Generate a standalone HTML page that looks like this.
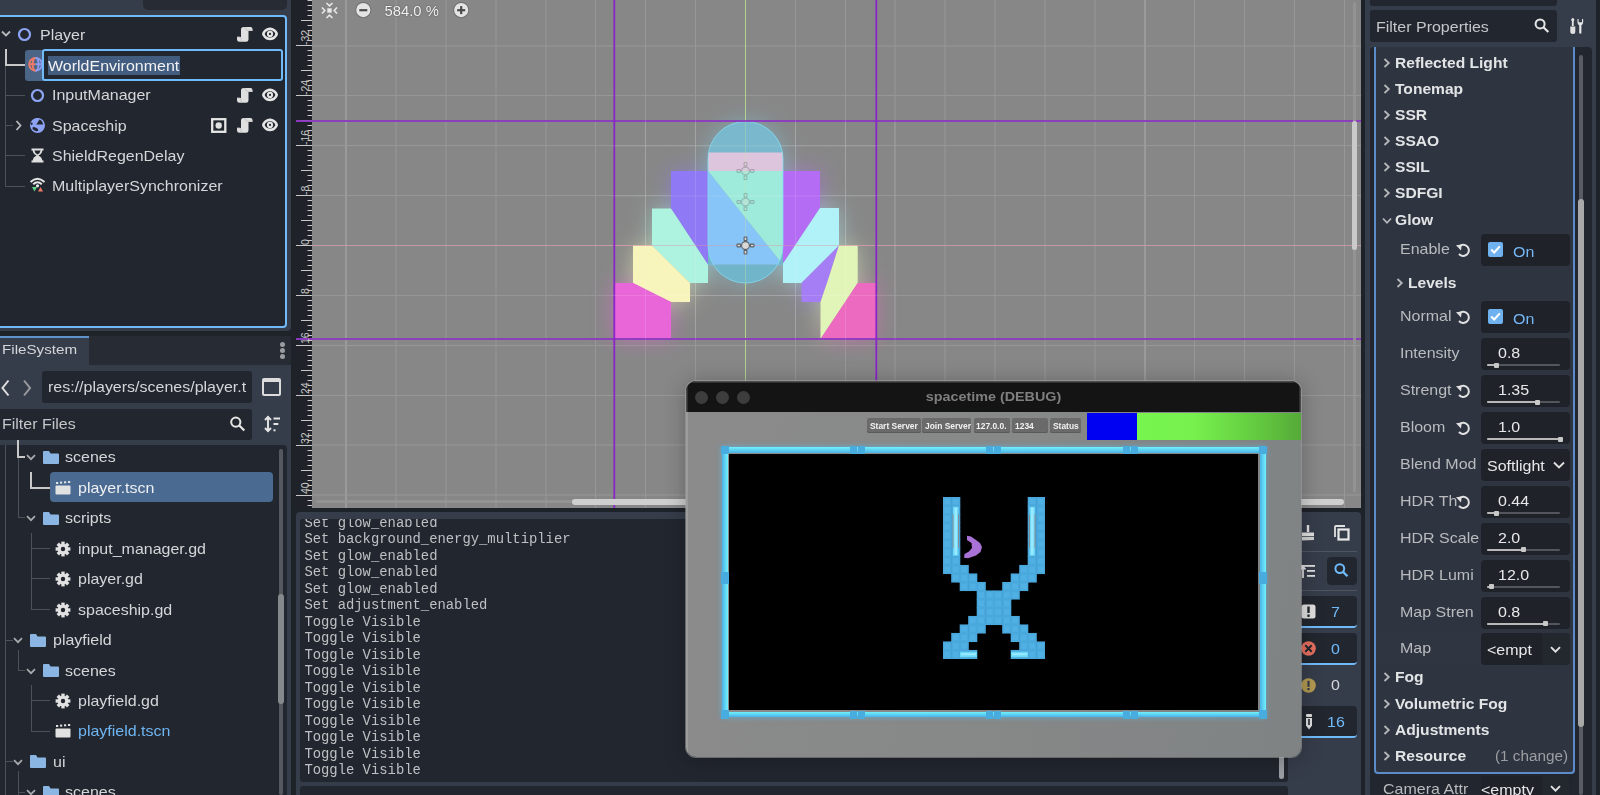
<!DOCTYPE html>
<html><head><meta charset="utf-8">
<style>
*{margin:0;padding:0;box-sizing:border-box}
html,body{width:1600px;height:795px;overflow:hidden;background:#1e2229;font-family:"Liberation Sans",sans-serif;color:#cdcfd2}
.a{position:absolute}
.t{position:absolute;white-space:nowrap;font-size:16px;line-height:20px;color:#d4d6d9}
.m{position:absolute;white-space:nowrap;font-family:"Liberation Mono",monospace;font-size:13.87px;line-height:16px;color:#bec0c3;transform:translateZ(0)}
.b{font-weight:bold}
</style></head><body>
<div id="root" class="a" style="left:0;top:0;width:1600px;height:795px;overflow:hidden">

<!-- ===== LEFT DOCK ===== -->
<div id="leftdock" class="a" style="left:0;top:0;width:291px;height:795px">
  <div class="a" style="left:0;top:0;width:291px;height:331px;background:#363d4a;border-radius:0 0 4px 0"></div>
  <div class="a" style="left:143px;top:0;width:144px;height:10px;background:#262b34;border-radius:0 0 5px 5px"></div>
  <div class="a" style="left:-4px;top:15px;width:291px;height:313px;background:#22262e;border:2px solid #70bafa;border-radius:4px"></div>
  <div class="a" style="left:4.5px;top:49px;width:2px;height:16px;background:#c8c8c8"></div>
<div class="a" style="left:5px;top:64px;width:20px;height:2px;background:#c8c8c8"></div>
<div class="a" style="left:5px;top:66px;width:1px;height:120px;background:#4b5059"></div>
<div class="a" style="left:5px;top:95px;width:20px;height:1px;background:#4b5059"></div>
<div class="a" style="left:5px;top:155px;width:20px;height:1px;background:#4b5059"></div>
<div class="a" style="left:5px;top:186px;width:20px;height:1px;background:#4b5059"></div>
<div class="a" style="left:5px;top:125px;width:8px;height:1px;background:#4b5059"></div>
<svg class="a" style="left:1px;top:30px" width="10" height="8" viewBox="0 0 10 8"><path d="M1 1.5 L5 5.5 L9 1.5" fill="none" stroke="#b8babd" stroke-width="1.8"/></svg>
<svg class="a" style="left:15px;top:120px" width="8" height="11" viewBox="0 0 8 11"><path d="M1.5 1 L5.5 5.5 L1.5 10" fill="none" stroke="#b8babd" stroke-width="1.8"/></svg>
<svg class="a" style="left:17px;top:27px" width="15" height="15" viewBox="0 0 15 15"><circle cx="7.5" cy="7.5" r="5.5" fill="none" stroke="#8da5f3" stroke-width="2.2"/></svg>
<svg class="a" style="left:30px;top:88px" width="15" height="15" viewBox="0 0 15 15"><circle cx="7.5" cy="7.5" r="5.5" fill="none" stroke="#8da5f3" stroke-width="2.2"/></svg>
<svg class="a" style="left:30px;top:118px" width="16" height="16" viewBox="0 0 16 16"><circle cx="7.5" cy="7.4" r="7.5" fill="#8da2f3"/><path d="M6.2 6.6 L9.6 1.6 Q12.4 2.6 13.1 6.6 Z" fill="#22262e"/><ellipse cx="5.3" cy="11.1" rx="3.1" ry="1.6" transform="rotate(25 5.3 11.1)" fill="#22262e"/><ellipse cx="1.7" cy="5.8" rx="0.9" ry="1.3" fill="#22262e"/></svg>
<svg class="a" style="left:30px;top:148px" width="15" height="15" viewBox="0 0 15 15"><path d="M1.5 0.5 H13.5 V2.5 H12.3 Q12 6 8.3 7.5 Q12 9 12.3 12.5 H13.5 V14.5 H1.5 V12.5 H2.7 Q3 9 6.7 7.5 Q3 6 2.7 2.5 H1.5 Z" fill="#e0e0e0"/><path d="M4.4 2.5 H10.6 Q10.3 5.2 7.5 6.4 Q4.7 5.2 4.4 2.5 Z" fill="#22262e"/></svg>
<svg class="a" style="left:29px;top:176px" width="17" height="16" viewBox="0 0 17 16"><path d="M1.5 6 Q8.5 -0.5 15.5 6" fill="none" stroke="#e6e6e6" stroke-width="2"/><path d="M4.2 8.3 Q8.5 4.3 12.8 8.3" fill="none" stroke="#e6e6e6" stroke-width="2"/><circle cx="8.5" cy="9.8" r="1.6" fill="#e6e6e6"/><path d="M3 11 H8 L5.5 15.5 Z" fill="#5fd48a"/><path d="M9 15.5 H14 L11.5 11 Z" fill="#f07a6a"/></svg>
<div class="a" style="left:25px;top:50px;width:20px;height:31px;background:#4a6585;border-radius:3px 0 0 3px"></div>
<svg class="a" style="left:27px;top:56px" width="16" height="17" viewBox="0 0 16 17"><defs><clipPath id="cl"><rect x="0" y="0" width="8.6" height="17"/></clipPath><clipPath id="cr"><rect x="8.6" y="0" width="8" height="17"/></clipPath></defs><g fill="none" stroke-width="1.9"><g clip-path="url(#cl)" stroke="#f07a6a"><circle cx="8.6" cy="8.3" r="6.4"/><ellipse cx="8.6" cy="8.3" rx="3" ry="6.4"/><path d="M2.2 8.3 H15"/></g><g clip-path="url(#cr)" stroke="#8d9cf0"><circle cx="8.6" cy="8.3" r="6.4"/><ellipse cx="8.6" cy="8.3" rx="3" ry="6.4"/><path d="M2.2 8.3 H15"/></g></g></svg>
<div class="a" style="left:42px;top:49px;width:241px;height:32px;background:#22262e;border:2px solid #70bafa;border-radius:3px"></div>
<div class="a" style="left:48px;top:56px;width:132px;height:19px;background:#425d80"></div>
<div class="t" style="left:48px;top:56px;color:#f2f2f2;font-size:14.40px;transform:scaleX(1.1111);transform-origin:0 50%">WorldEnvironment</div>
<div class="t" style="left:40px;top:24.5px;font-size:14.40px;transform:scaleX(1.1111);transform-origin:0 50%">Player</div>
<div class="t" style="left:52px;top:85.0px;font-size:14.40px;transform:scaleX(1.1111);transform-origin:0 50%">InputManager</div>
<div class="t" style="left:52px;top:115.5px;font-size:14.40px;transform:scaleX(1.1111);transform-origin:0 50%">Spaceship</div>
<div class="t" style="left:52px;top:145.5px;font-size:14.40px;transform:scaleX(1.1111);transform-origin:0 50%">ShieldRegenDelay</div>
<div class="t" style="left:52px;top:176.0px;font-size:14.40px;transform:scaleX(1.1111);transform-origin:0 50%">MultiplayerSynchronizer</div>
<svg class="a" style="left:237px;top:27px" width="16" height="15" viewBox="0 0 16 15"><path d="M4 2.5 Q4 0 6.5 0 H13.5 Q15.5 0 15.5 2 V4 H11.5 V12.5 Q11.5 14.8 9 14.8 H2.5 Q0 14.8 0 12.5 V10 H4 Z" fill="#dfdfdf"/><path d="M6.5 0.2 Q9.5 0.5 9.3 3.2 H15.5" fill="none" stroke="#bdbdbd" stroke-width="0.8"/><path d="M0 10 H3 Q4.2 10 4.2 12.5 V14.8" fill="none" stroke="#bdbdbd" stroke-width="0.8"/></svg>
<svg class="a" style="left:262px;top:27px" width="16" height="14" viewBox="0 0 16 14"><path d="M8 0.6 C12.6 0.6 15.5 4.6 16 6.9 C15.5 9.2 12.6 13.2 8 13.2 C3.4 13.2 0.5 9.2 0 6.9 C0.5 4.6 3.4 0.6 8 0.6 Z" fill="#e6e6e6"/><path d="M8 3.3 C10.9 3.3 12.8 5.3 13.3 6.9 C12.8 8.5 10.9 10.5 8 10.5 C5.1 10.5 3.2 8.5 2.7 6.9 C3.2 5.3 5.1 3.3 8 3.3 Z" fill="#22262e"/><circle cx="8" cy="6.9" r="3.1" fill="#e6e6e6"/><circle cx="8" cy="6.9" r="1.1" fill="#22262e"/></svg>
<svg class="a" style="left:237px;top:88px" width="16" height="15" viewBox="0 0 16 15"><path d="M4 2.5 Q4 0 6.5 0 H13.5 Q15.5 0 15.5 2 V4 H11.5 V12.5 Q11.5 14.8 9 14.8 H2.5 Q0 14.8 0 12.5 V10 H4 Z" fill="#dfdfdf"/><path d="M6.5 0.2 Q9.5 0.5 9.3 3.2 H15.5" fill="none" stroke="#bdbdbd" stroke-width="0.8"/><path d="M0 10 H3 Q4.2 10 4.2 12.5 V14.8" fill="none" stroke="#bdbdbd" stroke-width="0.8"/></svg>
<svg class="a" style="left:262px;top:88px" width="16" height="14" viewBox="0 0 16 14"><path d="M8 0.6 C12.6 0.6 15.5 4.6 16 6.9 C15.5 9.2 12.6 13.2 8 13.2 C3.4 13.2 0.5 9.2 0 6.9 C0.5 4.6 3.4 0.6 8 0.6 Z" fill="#e6e6e6"/><path d="M8 3.3 C10.9 3.3 12.8 5.3 13.3 6.9 C12.8 8.5 10.9 10.5 8 10.5 C5.1 10.5 3.2 8.5 2.7 6.9 C3.2 5.3 5.1 3.3 8 3.3 Z" fill="#22262e"/><circle cx="8" cy="6.9" r="3.1" fill="#e6e6e6"/><circle cx="8" cy="6.9" r="1.1" fill="#22262e"/></svg>
<svg class="a" style="left:237px;top:118px" width="16" height="15" viewBox="0 0 16 15"><path d="M4 2.5 Q4 0 6.5 0 H13.5 Q15.5 0 15.5 2 V4 H11.5 V12.5 Q11.5 14.8 9 14.8 H2.5 Q0 14.8 0 12.5 V10 H4 Z" fill="#dfdfdf"/><path d="M6.5 0.2 Q9.5 0.5 9.3 3.2 H15.5" fill="none" stroke="#bdbdbd" stroke-width="0.8"/><path d="M0 10 H3 Q4.2 10 4.2 12.5 V14.8" fill="none" stroke="#bdbdbd" stroke-width="0.8"/></svg>
<svg class="a" style="left:262px;top:118px" width="16" height="14" viewBox="0 0 16 14"><path d="M8 0.6 C12.6 0.6 15.5 4.6 16 6.9 C15.5 9.2 12.6 13.2 8 13.2 C3.4 13.2 0.5 9.2 0 6.9 C0.5 4.6 3.4 0.6 8 0.6 Z" fill="#e6e6e6"/><path d="M8 3.3 C10.9 3.3 12.8 5.3 13.3 6.9 C12.8 8.5 10.9 10.5 8 10.5 C5.1 10.5 3.2 8.5 2.7 6.9 C3.2 5.3 5.1 3.3 8 3.3 Z" fill="#22262e"/><circle cx="8" cy="6.9" r="3.1" fill="#e6e6e6"/><circle cx="8" cy="6.9" r="1.1" fill="#22262e"/></svg>
<svg class="a" style="left:211px;top:118px" width="16" height="15" viewBox="0 0 16 15"><rect x="1.2" y="1.2" width="13.1" height="12.6" fill="none" stroke="#e6e6e6" stroke-width="2.3"/><circle cx="7.7" cy="7.5" r="3.2" fill="#e0e0e0"/></svg>


  <div class="a" style="left:0;top:336px;width:291px;height:459px;background:#363d4a;border-radius:4px 4px 0 0"></div>
  <div class="a" style="left:89px;top:336px;width:202px;height:29px;background:#262b34;border-radius:0 4px 0 0"></div>
  <div class="a" style="left:0;top:336px;width:89px;height:2px;background:#5e93cc"></div>
  <div class="t" style="left:2px;top:340px;font-size:13.68px;transform:scaleX(1.1111);transform-origin:0 50%">FileSystem</div>
  <div class="a" style="left:280px;top:342px;width:5px;height:5px;border-radius:50%;background:#9a9ca0"></div>
  <div class="a" style="left:280px;top:348px;width:5px;height:5px;border-radius:50%;background:#9a9ca0"></div>
  <div class="a" style="left:280px;top:354px;width:5px;height:5px;border-radius:50%;background:#9a9ca0"></div>
  <!-- path row -->
  <div class="a" style="left:42px;top:371px;width:210px;height:32px;background:#22262e;border-radius:3px"></div>
  <div class="t" style="left:48px;top:377px;font-size:14.40px;transform:scaleX(1.1111);transform-origin:0 50%">res://players/scenes/player.t</div>
  <div class="a" style="left:262px;top:378px;width:19px;height:18px;border:2.5px solid #dcdcdc;border-top-width:4px;border-radius:2px;background:#363d4a"></div>
  <!-- filter row -->
  <div class="a" style="left:-4px;top:409px;width:256px;height:31px;background:#22262e;border-radius:3px"></div>
  <div class="t" style="left:2px;top:414px;color:#c4c6c9;font-size:14.40px;transform:scaleX(1.1111);transform-origin:0 50%">Filter Files</div>
  <svg class="a" style="left:0;top:378px" width="34" height="20" viewBox="0 0 34 20"><path d="M8.5 2.5 L2.5 10 L8.5 17.5" fill="none" stroke="#e0e0e0" stroke-width="2"/><path d="M24 2.5 L30 10 L24 17.5" fill="none" stroke="#9a9ca0" stroke-width="2"/></svg>
  <svg class="a" style="left:228px;top:415px" width="18" height="18" viewBox="0 0 18 18"><circle cx="7.8" cy="7.1" r="4.6" fill="none" stroke="#e6e6e6" stroke-width="2"/><path d="M11 10.3 L16.3 15.5" stroke="#e6e6e6" stroke-width="2.2"/></svg>
  <svg class="a" style="left:263px;top:415px" width="19" height="18" viewBox="0 0 19 18"><path d="M5 2 V16 M2 5 L5 1.8 L8 5 M2 13 L5 16.2 L8 13" fill="none" stroke="#e6e6e6" stroke-width="1.9"/><rect x="10.5" y="2.5" width="6.5" height="2" fill="#e6e6e6"/><rect x="10.5" y="8" width="4.8" height="2" fill="#e6e6e6"/><rect x="10.5" y="14.3" width="2" height="2" fill="#e6e6e6"/></svg>
  <div id="fstree" class="a" style="left:-4px;top:445px;width:291px;height:360px;background:#22262e;border-radius:4px"></div>
<div class="a" style="left:5px;top:445px;width:1px;height:350px;background:#4b5059"></div>
<div class="a" style="left:18px;top:445px;width:1px;height:73px;background:#4b5059"></div>
<div class="a" style="left:18px;top:517px;width:7px;height:1px;background:#4b5059"></div>
<div class="a" style="left:17px;top:440px;width:2px;height:17px;background:#c8c8c8"></div>
<div class="a" style="left:17px;top:456px;width:8px;height:2px;background:#c8c8c8"></div>
<div class="a" style="left:50px;top:472px;width:223px;height:30px;background:#4b6a92;border-radius:4px"></div>
<div class="a" style="left:30px;top:472px;width:2px;height:16px;background:#c8c8c8"></div>
<div class="a" style="left:30px;top:487px;width:20px;height:2px;background:#c8c8c8"></div>
<div class="a" style="left:31px;top:533px;width:1px;height:77px;background:#4b5059"></div>
<div class="a" style="left:31px;top:548px;width:19px;height:1px;background:#4b5059"></div>
<div class="a" style="left:31px;top:578px;width:19px;height:1px;background:#4b5059"></div>
<div class="a" style="left:31px;top:609px;width:19px;height:1px;background:#4b5059"></div>
<div class="a" style="left:5px;top:640px;width:8px;height:1px;background:#4b5059"></div>
<div class="a" style="left:18px;top:650px;width:1px;height:21px;background:#4b5059"></div>
<div class="a" style="left:18px;top:670px;width:7px;height:1px;background:#4b5059"></div>
<div class="a" style="left:31px;top:685px;width:1px;height:46px;background:#4b5059"></div>
<div class="a" style="left:31px;top:700px;width:19px;height:1px;background:#4b5059"></div>
<div class="a" style="left:31px;top:731px;width:19px;height:1px;background:#4b5059"></div>
<div class="a" style="left:5px;top:761px;width:8px;height:1px;background:#4b5059"></div>
<div class="a" style="left:18px;top:771px;width:1px;height:24px;background:#4b5059"></div>
<div class="a" style="left:18px;top:792px;width:7px;height:1px;background:#4b5059"></div>
<svg class="a" style="left:26px;top:454px" width="10" height="7" viewBox="0 0 10 7"><path d="M1 1.2 L5 5.2 L9 1.2" fill="none" stroke="#a9abae" stroke-width="1.7"/></svg>
<svg class="a" style="left:42.5px;top:450.5px" width="16" height="13" viewBox="0 0 16 13"><path d="M0 1 Q0 0 1 0 H6 L7.5 2.5 H15 Q16 2.5 16 3.5 V12 Q16 13 15 13 H1 Q0 13 0 12 Z" fill="#8bb5e2"/></svg>
<div class="t" style="left:65px;top:447px;color:#d4d6d9;font-size:14.40px;transform:scaleX(1.1111);transform-origin:0 50%">scenes</div>
<svg class="a" style="left:55px;top:480.5px" width="16" height="14" viewBox="0 0 16 14"><rect x="0.5" y="4.5" width="15" height="9" rx="1" fill="#e2e2e2"/><g fill="#e2e2e2"><rect x="1" y="1" width="2.2" height="2"/><rect x="5" y="0.6" width="2.2" height="2"/><rect x="9" y="0.3" width="2.2" height="2"/><rect x="13" y="0" width="2.2" height="2"/></g></svg>
<div class="t" style="left:78px;top:477.5px;color:#eef0f2;font-size:14.40px;transform:scaleX(1.1111);transform-origin:0 50%">player.tscn</div>
<svg class="a" style="left:26px;top:515px" width="10" height="7" viewBox="0 0 10 7"><path d="M1 1.2 L5 5.2 L9 1.2" fill="none" stroke="#a9abae" stroke-width="1.7"/></svg>
<svg class="a" style="left:42.5px;top:511.5px" width="16" height="13" viewBox="0 0 16 13"><path d="M0 1 Q0 0 1 0 H6 L7.5 2.5 H15 Q16 2.5 16 3.5 V12 Q16 13 15 13 H1 Q0 13 0 12 Z" fill="#8bb5e2"/></svg>
<div class="t" style="left:65px;top:508px;color:#d4d6d9;font-size:14.40px;transform:scaleX(1.1111);transform-origin:0 50%">scripts</div>
<svg class="a" style="left:55px;top:540.5px" width="16" height="16" viewBox="0 0 16 16"><g fill="#e2e2e2"><circle cx="8" cy="8" r="5.3"/><rect x="6.3" y="0.6" width="3.4" height="3.6" transform="rotate(0 8 8)"/><rect x="6.3" y="0.6" width="3.4" height="3.6" transform="rotate(45 8 8)"/><rect x="6.3" y="0.6" width="3.4" height="3.6" transform="rotate(90 8 8)"/><rect x="6.3" y="0.6" width="3.4" height="3.6" transform="rotate(135 8 8)"/><rect x="6.3" y="0.6" width="3.4" height="3.6" transform="rotate(180 8 8)"/><rect x="6.3" y="0.6" width="3.4" height="3.6" transform="rotate(225 8 8)"/><rect x="6.3" y="0.6" width="3.4" height="3.6" transform="rotate(270 8 8)"/><rect x="6.3" y="0.6" width="3.4" height="3.6" transform="rotate(315 8 8)"/></g><circle cx="8" cy="8" r="2.2" fill="#22262e"/></svg>
<div class="t" style="left:78px;top:538.5px;color:#d4d6d9;font-size:14.40px;transform:scaleX(1.1111);transform-origin:0 50%">input_manager.gd</div>
<svg class="a" style="left:55px;top:571px" width="16" height="16" viewBox="0 0 16 16"><g fill="#e2e2e2"><circle cx="8" cy="8" r="5.3"/><rect x="6.3" y="0.6" width="3.4" height="3.6" transform="rotate(0 8 8)"/><rect x="6.3" y="0.6" width="3.4" height="3.6" transform="rotate(45 8 8)"/><rect x="6.3" y="0.6" width="3.4" height="3.6" transform="rotate(90 8 8)"/><rect x="6.3" y="0.6" width="3.4" height="3.6" transform="rotate(135 8 8)"/><rect x="6.3" y="0.6" width="3.4" height="3.6" transform="rotate(180 8 8)"/><rect x="6.3" y="0.6" width="3.4" height="3.6" transform="rotate(225 8 8)"/><rect x="6.3" y="0.6" width="3.4" height="3.6" transform="rotate(270 8 8)"/><rect x="6.3" y="0.6" width="3.4" height="3.6" transform="rotate(315 8 8)"/></g><circle cx="8" cy="8" r="2.2" fill="#22262e"/></svg>
<div class="t" style="left:78px;top:569px;color:#d4d6d9;font-size:14.40px;transform:scaleX(1.1111);transform-origin:0 50%">player.gd</div>
<svg class="a" style="left:55px;top:601.5px" width="16" height="16" viewBox="0 0 16 16"><g fill="#e2e2e2"><circle cx="8" cy="8" r="5.3"/><rect x="6.3" y="0.6" width="3.4" height="3.6" transform="rotate(0 8 8)"/><rect x="6.3" y="0.6" width="3.4" height="3.6" transform="rotate(45 8 8)"/><rect x="6.3" y="0.6" width="3.4" height="3.6" transform="rotate(90 8 8)"/><rect x="6.3" y="0.6" width="3.4" height="3.6" transform="rotate(135 8 8)"/><rect x="6.3" y="0.6" width="3.4" height="3.6" transform="rotate(180 8 8)"/><rect x="6.3" y="0.6" width="3.4" height="3.6" transform="rotate(225 8 8)"/><rect x="6.3" y="0.6" width="3.4" height="3.6" transform="rotate(270 8 8)"/><rect x="6.3" y="0.6" width="3.4" height="3.6" transform="rotate(315 8 8)"/></g><circle cx="8" cy="8" r="2.2" fill="#22262e"/></svg>
<div class="t" style="left:78px;top:599.5px;color:#d4d6d9;font-size:14.40px;transform:scaleX(1.1111);transform-origin:0 50%">spaceship.gd</div>
<svg class="a" style="left:13px;top:637px" width="10" height="7" viewBox="0 0 10 7"><path d="M1 1.2 L5 5.2 L9 1.2" fill="none" stroke="#a9abae" stroke-width="1.7"/></svg>
<svg class="a" style="left:29.5px;top:633.5px" width="16" height="13" viewBox="0 0 16 13"><path d="M0 1 Q0 0 1 0 H6 L7.5 2.5 H15 Q16 2.5 16 3.5 V12 Q16 13 15 13 H1 Q0 13 0 12 Z" fill="#8bb5e2"/></svg>
<div class="t" style="left:52.5px;top:630px;color:#d4d6d9;font-size:14.40px;transform:scaleX(1.1111);transform-origin:0 50%">playfield</div>
<svg class="a" style="left:26px;top:667.5px" width="10" height="7" viewBox="0 0 10 7"><path d="M1 1.2 L5 5.2 L9 1.2" fill="none" stroke="#a9abae" stroke-width="1.7"/></svg>
<svg class="a" style="left:42.5px;top:664.0px" width="16" height="13" viewBox="0 0 16 13"><path d="M0 1 Q0 0 1 0 H6 L7.5 2.5 H15 Q16 2.5 16 3.5 V12 Q16 13 15 13 H1 Q0 13 0 12 Z" fill="#8bb5e2"/></svg>
<div class="t" style="left:65px;top:660.5px;color:#d4d6d9;font-size:14.40px;transform:scaleX(1.1111);transform-origin:0 50%">scenes</div>
<svg class="a" style="left:55px;top:692.5px" width="16" height="16" viewBox="0 0 16 16"><g fill="#e2e2e2"><circle cx="8" cy="8" r="5.3"/><rect x="6.3" y="0.6" width="3.4" height="3.6" transform="rotate(0 8 8)"/><rect x="6.3" y="0.6" width="3.4" height="3.6" transform="rotate(45 8 8)"/><rect x="6.3" y="0.6" width="3.4" height="3.6" transform="rotate(90 8 8)"/><rect x="6.3" y="0.6" width="3.4" height="3.6" transform="rotate(135 8 8)"/><rect x="6.3" y="0.6" width="3.4" height="3.6" transform="rotate(180 8 8)"/><rect x="6.3" y="0.6" width="3.4" height="3.6" transform="rotate(225 8 8)"/><rect x="6.3" y="0.6" width="3.4" height="3.6" transform="rotate(270 8 8)"/><rect x="6.3" y="0.6" width="3.4" height="3.6" transform="rotate(315 8 8)"/></g><circle cx="8" cy="8" r="2.2" fill="#22262e"/></svg>
<div class="t" style="left:78px;top:690.5px;color:#d4d6d9;font-size:14.40px;transform:scaleX(1.1111);transform-origin:0 50%">playfield.gd</div>
<svg class="a" style="left:55px;top:724px" width="16" height="14" viewBox="0 0 16 14"><rect x="0.5" y="4.5" width="15" height="9" rx="1" fill="#e2e2e2"/><g fill="#e2e2e2"><rect x="1" y="1" width="2.2" height="2"/><rect x="5" y="0.6" width="2.2" height="2"/><rect x="9" y="0.3" width="2.2" height="2"/><rect x="13" y="0" width="2.2" height="2"/></g></svg>
<div class="t" style="left:78px;top:721px;color:#6fb5f2;font-size:14.40px;transform:scaleX(1.1111);transform-origin:0 50%">playfield.tscn</div>
<svg class="a" style="left:13px;top:758.5px" width="10" height="7" viewBox="0 0 10 7"><path d="M1 1.2 L5 5.2 L9 1.2" fill="none" stroke="#a9abae" stroke-width="1.7"/></svg>
<svg class="a" style="left:29.5px;top:755.0px" width="16" height="13" viewBox="0 0 16 13"><path d="M0 1 Q0 0 1 0 H6 L7.5 2.5 H15 Q16 2.5 16 3.5 V12 Q16 13 15 13 H1 Q0 13 0 12 Z" fill="#8bb5e2"/></svg>
<div class="t" style="left:52.5px;top:751.5px;color:#d4d6d9;font-size:14.40px;transform:scaleX(1.1111);transform-origin:0 50%">ui</div>
<svg class="a" style="left:26px;top:789px" width="10" height="7" viewBox="0 0 10 7"><path d="M1 1.2 L5 5.2 L9 1.2" fill="none" stroke="#a9abae" stroke-width="1.7"/></svg>
<svg class="a" style="left:42.5px;top:785.5px" width="16" height="13" viewBox="0 0 16 13"><path d="M0 1 Q0 0 1 0 H6 L7.5 2.5 H15 Q16 2.5 16 3.5 V12 Q16 13 15 13 H1 Q0 13 0 12 Z" fill="#8bb5e2"/></svg>
<div class="t" style="left:65px;top:782px;color:#d4d6d9;font-size:14.40px;transform:scaleX(1.1111);transform-origin:0 50%">scenes</div>

  <div class="a" style="left:279px;top:449px;width:4px;height:346px;background:#55595f;border-radius:2px"></div>
  <div class="a" style="left:278px;top:594px;width:6px;height:110px;background:#85888d;border-radius:3px"></div>
</div>

<!-- ===== VIEWPORT ===== -->
<div id="viewport" class="a" style="left:291px;top:0;width:1070px;height:508px;background:#1e2229;overflow:hidden">
<svg class="a" style="left:0;top:0" width="1070" height="508" viewBox="291 0 1070 508"><defs><filter id="glow" x="-50%" y="-50%" width="200%" height="200%"><feGaussianBlur stdDeviation="11"/></filter><filter id="glow2" x="-50%" y="-50%" width="200%" height="200%"><feGaussianBlur stdDeviation="4"/></filter></defs><rect x="291" y="0" width="21" height="508" fill="#1f2228"/><rect x="312" y="0" width="1049" height="508" fill="#878787"/><rect x="345.2" y="0" width="1.6" height="508" fill="#a0a0a0"/><rect x="395.5" y="0" width="1" height="508" fill="#979797"/><rect x="445.5" y="0" width="1" height="508" fill="#979797"/><rect x="495.5" y="0" width="1" height="508" fill="#979797"/><rect x="545.5" y="0" width="1" height="508" fill="#979797"/><rect x="595.0" y="0" width="1" height="508" fill="#979797"/><rect x="645.0" y="0" width="1" height="508" fill="#979797"/><rect x="695.0" y="0" width="1" height="508" fill="#979797"/><rect x="795.0" y="0" width="1" height="508" fill="#979797"/><rect x="845.0" y="0" width="1" height="508" fill="#979797"/><rect x="894.5" y="0" width="1" height="508" fill="#979797"/><rect x="944.5" y="0" width="1" height="508" fill="#979797"/><rect x="994.5" y="0" width="1" height="508" fill="#979797"/><rect x="1044.5" y="0" width="1" height="508" fill="#979797"/><rect x="1094.5" y="0" width="1" height="508" fill="#979797"/><rect x="1144.2" y="0" width="1.6" height="508" fill="#a0a0a0"/><rect x="1194.0" y="0" width="1" height="508" fill="#979797"/><rect x="1244.0" y="0" width="1" height="508" fill="#979797"/><rect x="1294.0" y="0" width="1" height="508" fill="#979797"/><rect x="1344.0" y="0" width="1" height="508" fill="#979797"/><rect x="312" y="45.5" width="1049" height="1" fill="#979797"/><rect x="312" y="95.0" width="1049" height="1" fill="#979797"/><rect x="312" y="145.0" width="1049" height="1" fill="#979797"/><rect x="312" y="195.0" width="1049" height="1" fill="#979797"/><rect x="312" y="295.0" width="1049" height="1" fill="#979797"/><rect x="312" y="345.0" width="1049" height="1" fill="#979797"/><rect x="312" y="395.0" width="1049" height="1" fill="#979797"/><rect x="312" y="444.5" width="1049" height="1" fill="#979797"/><rect x="312" y="494.5" width="1049" height="1" fill="#979797"/><g filter="url(#glow)" opacity="0.55"><polygon points="671,171 708,171 708,264.7 671,208.5" fill="#9079f5"/><polygon points="652,208.5 671,208.5 708,264.7 708,283 690,283 652,245.5" fill="#aef2e0"/><polygon points="633,245.5 652,245.5 690,283 690,302 671,302 633,283" fill="#f7f5bb"/><polygon points="614,283 633,283 671,302 671,339 614,339" fill="#e966d8"/><polygon points="783,171 820,171 820,208 783,263.6" fill="#b56cf5"/><polygon points="820,208 839,208 839,245.5 801.5,283 783,283 783,263.6" fill="#b0f2f7"/><polygon points="839,245.5 801.5,283 801.5,302 820.5,302 828,280" fill="#a57ef5"/><polygon points="839,245.5 857.7,245.5 857.7,283 820.5,339 820.5,302 828,280" fill="#e2f5b8"/><polygon points="857.7,283 876,283 876,339 820.5,339" fill="#ec6ac0"/><polygon points="708,171 708,264.7 783,264.7" fill="#87c4f7"/><polygon points="708,171 783,171 783,264.7" fill="#9eebdc"/><rect x="708" y="121.5" width="75" height="161.5" rx="37.5" fill="#7fc8e0"/></g><rect x="312" y="245" width="1049" height="1" fill="#c99aae" opacity="0.9"/><rect x="745" y="0" width="1" height="508" fill="#a9cf8a" opacity="0.9"/><polygon points="671,171 708,171 708,264.7 671,208.5" fill="#9079f5"/><polygon points="652,208.5 671,208.5 708,264.7 708,283 690,283 652,245.5" fill="#aef2e0"/><polygon points="633,245.5 652,245.5 690,283 690,302 671,302 633,283" fill="#f7f5bb"/><polygon points="614,283 633,283 671,302 671,339 614,339" fill="#e966d8"/><polygon points="783,171 820,171 820,208 783,263.6" fill="#b56cf5"/><polygon points="820,208 839,208 839,245.5 801.5,283 783,283 783,263.6" fill="#b0f2f7"/><polygon points="839,245.5 801.5,283 801.5,302 820.5,302 828,280" fill="#a57ef5"/><polygon points="839,245.5 857.7,245.5 857.7,283 820.5,339 820.5,302 828,280" fill="#e2f5b8"/><polygon points="857.7,283 876,283 876,339 820.5,339" fill="#ec6ac0"/><polygon points="708,171 708,264.7 783,264.7" fill="#87c4f7"/><polygon points="708,171 783,171 783,264.7" fill="#9eebdc"/><path d="M708 159 A37.5 37.5 0 0 1 783 159 V171 H708 Z" fill="#7ab9cd"/><rect x="708" y="152.5" width="75" height="18.5" fill="#dcc5dd"/><path d="M708 264.7 H783 V245.5 A37.5 37.5 0 0 1 708 245.5 Z" fill="#70b5c9"/><path d="M708 159 A37.5 37.5 0 0 1 783 159 V245.5 A37.5 37.5 0 0 1 708 245.5 Z" fill="none" stroke="#86dcf2" stroke-width="1" opacity="0.8"/><rect x="745" y="0" width="1" height="508" fill="#c8e6a0" opacity="0.35"/><rect x="614" y="245" width="262" height="1" fill="#d99aa8" opacity="0.45"/><rect x="296" y="120.1" width="1065" height="1.8" fill="#8c38c0"/><rect x="296" y="338.1" width="1065" height="1.8" fill="#8c38c0"/><rect x="613.4" y="0" width="1.8" height="508" fill="#8a25c8"/><rect x="875.4" y="0" width="1.8" height="508" fill="#8a25c8"/><rect x="645.0" y="120" width="1" height="220" fill="#ffffff" opacity="0.12"/><rect x="695.0" y="120" width="1" height="220" fill="#ffffff" opacity="0.12"/><rect x="795.0" y="120" width="1" height="220" fill="#ffffff" opacity="0.12"/><rect x="845.0" y="120" width="1" height="220" fill="#ffffff" opacity="0.12"/><rect x="894.5" y="120" width="1" height="220" fill="#ffffff" opacity="0.12"/><rect x="612" y="145.5" width="266" height="1" fill="#ffffff" opacity="0.12"/><rect x="612" y="195.5" width="266" height="1" fill="#ffffff" opacity="0.12"/><rect x="612" y="295" width="266" height="1" fill="#ffffff" opacity="0.12"/><g opacity="0.35" stroke="#5c5f63" stroke-width="1.1" fill="#d8d8d8"><rect x="744.1" y="162.5" width="2.8" height="3.6" rx="0.6"/><rect x="744.1" y="175.9" width="2.8" height="3.6" rx="0.6"/><rect x="737.0" y="169.6" width="3.6" height="2.8" rx="0.6"/><rect x="750.4" y="169.6" width="3.6" height="2.8" rx="0.6"/><circle cx="745.5" cy="171" r="3.9"/></g><g opacity="0.35" stroke="#5c5f63" stroke-width="1.1" fill="#d8d8d8"><rect x="744.1" y="193.5" width="2.8" height="3.6" rx="0.6"/><rect x="744.1" y="206.9" width="2.8" height="3.6" rx="0.6"/><rect x="737.0" y="200.6" width="3.6" height="2.8" rx="0.6"/><rect x="750.4" y="200.6" width="3.6" height="2.8" rx="0.6"/><circle cx="745.5" cy="202" r="3.9"/></g><g opacity="1" stroke="#5c5f63" stroke-width="1.1" fill="#d8d8d8"><rect x="744.1" y="237.0" width="2.8" height="3.6" rx="0.6"/><rect x="744.1" y="250.4" width="2.8" height="3.6" rx="0.6"/><rect x="737.0" y="244.1" width="3.6" height="2.8" rx="0.6"/><rect x="750.4" y="244.1" width="3.6" height="2.8" rx="0.6"/><circle cx="745.5" cy="245.5" r="3.9"/></g><rect x="307.5" y="0" width="4.5" height="1" fill="#c8c8c8"/><rect x="307.5" y="5" width="4.5" height="1" fill="#c8c8c8"/><rect x="307.5" y="10" width="4.5" height="1" fill="#c8c8c8"/><rect x="307.5" y="15" width="4.5" height="1" fill="#c8c8c8"/><rect x="301" y="20" width="11" height="1" fill="#c8c8c8"/><rect x="307.5" y="25" width="4.5" height="1" fill="#c8c8c8"/><rect x="307.5" y="30" width="4.5" height="1" fill="#c8c8c8"/><rect x="307.5" y="35" width="4.5" height="1" fill="#c8c8c8"/><rect x="307.5" y="40" width="4.5" height="1" fill="#c8c8c8"/><rect x="296" y="45" width="16" height="1" fill="#c8c8c8"/><rect x="307.5" y="50" width="4.5" height="1" fill="#c8c8c8"/><rect x="307.5" y="55" width="4.5" height="1" fill="#c8c8c8"/><rect x="307.5" y="60" width="4.5" height="1" fill="#c8c8c8"/><rect x="307.5" y="65" width="4.5" height="1" fill="#c8c8c8"/><rect x="301" y="70" width="11" height="1" fill="#c8c8c8"/><rect x="307.5" y="75" width="4.5" height="1" fill="#c8c8c8"/><rect x="307.5" y="80" width="4.5" height="1" fill="#c8c8c8"/><rect x="307.5" y="85" width="4.5" height="1" fill="#c8c8c8"/><rect x="307.5" y="90" width="4.5" height="1" fill="#c8c8c8"/><rect x="296" y="95" width="16" height="1" fill="#c8c8c8"/><rect x="307.5" y="100" width="4.5" height="1" fill="#c8c8c8"/><rect x="307.5" y="105" width="4.5" height="1" fill="#c8c8c8"/><rect x="307.5" y="110" width="4.5" height="1" fill="#c8c8c8"/><rect x="307.5" y="115" width="4.5" height="1" fill="#c8c8c8"/><rect x="301" y="120" width="11" height="1" fill="#c8c8c8"/><rect x="307.5" y="125" width="4.5" height="1" fill="#c8c8c8"/><rect x="307.5" y="130" width="4.5" height="1" fill="#c8c8c8"/><rect x="307.5" y="135" width="4.5" height="1" fill="#c8c8c8"/><rect x="307.5" y="140" width="4.5" height="1" fill="#c8c8c8"/><rect x="296" y="145" width="16" height="1" fill="#c8c8c8"/><rect x="307.5" y="150" width="4.5" height="1" fill="#c8c8c8"/><rect x="307.5" y="155" width="4.5" height="1" fill="#c8c8c8"/><rect x="307.5" y="160" width="4.5" height="1" fill="#c8c8c8"/><rect x="307.5" y="165" width="4.5" height="1" fill="#c8c8c8"/><rect x="301" y="170" width="11" height="1" fill="#c8c8c8"/><rect x="307.5" y="175" width="4.5" height="1" fill="#c8c8c8"/><rect x="307.5" y="180" width="4.5" height="1" fill="#c8c8c8"/><rect x="307.5" y="185" width="4.5" height="1" fill="#c8c8c8"/><rect x="307.5" y="190" width="4.5" height="1" fill="#c8c8c8"/><rect x="296" y="195" width="16" height="1" fill="#c8c8c8"/><rect x="307.5" y="200" width="4.5" height="1" fill="#c8c8c8"/><rect x="307.5" y="205" width="4.5" height="1" fill="#c8c8c8"/><rect x="307.5" y="210" width="4.5" height="1" fill="#c8c8c8"/><rect x="307.5" y="215" width="4.5" height="1" fill="#c8c8c8"/><rect x="301" y="220" width="11" height="1" fill="#c8c8c8"/><rect x="307.5" y="225" width="4.5" height="1" fill="#c8c8c8"/><rect x="307.5" y="230" width="4.5" height="1" fill="#c8c8c8"/><rect x="307.5" y="235" width="4.5" height="1" fill="#c8c8c8"/><rect x="307.5" y="240" width="4.5" height="1" fill="#c8c8c8"/><rect x="296" y="245" width="16" height="1" fill="#c8c8c8"/><rect x="307.5" y="250" width="4.5" height="1" fill="#c8c8c8"/><rect x="307.5" y="255" width="4.5" height="1" fill="#c8c8c8"/><rect x="307.5" y="260" width="4.5" height="1" fill="#c8c8c8"/><rect x="307.5" y="265" width="4.5" height="1" fill="#c8c8c8"/><rect x="301" y="270" width="11" height="1" fill="#c8c8c8"/><rect x="307.5" y="275" width="4.5" height="1" fill="#c8c8c8"/><rect x="307.5" y="280" width="4.5" height="1" fill="#c8c8c8"/><rect x="307.5" y="285" width="4.5" height="1" fill="#c8c8c8"/><rect x="307.5" y="290" width="4.5" height="1" fill="#c8c8c8"/><rect x="296" y="295" width="16" height="1" fill="#c8c8c8"/><rect x="307.5" y="300" width="4.5" height="1" fill="#c8c8c8"/><rect x="307.5" y="305" width="4.5" height="1" fill="#c8c8c8"/><rect x="307.5" y="310" width="4.5" height="1" fill="#c8c8c8"/><rect x="307.5" y="315" width="4.5" height="1" fill="#c8c8c8"/><rect x="301" y="320" width="11" height="1" fill="#c8c8c8"/><rect x="307.5" y="325" width="4.5" height="1" fill="#c8c8c8"/><rect x="307.5" y="330" width="4.5" height="1" fill="#c8c8c8"/><rect x="307.5" y="335" width="4.5" height="1" fill="#c8c8c8"/><rect x="307.5" y="340" width="4.5" height="1" fill="#c8c8c8"/><rect x="296" y="345" width="16" height="1" fill="#c8c8c8"/><rect x="307.5" y="350" width="4.5" height="1" fill="#c8c8c8"/><rect x="307.5" y="355" width="4.5" height="1" fill="#c8c8c8"/><rect x="307.5" y="360" width="4.5" height="1" fill="#c8c8c8"/><rect x="307.5" y="365" width="4.5" height="1" fill="#c8c8c8"/><rect x="301" y="370" width="11" height="1" fill="#c8c8c8"/><rect x="307.5" y="375" width="4.5" height="1" fill="#c8c8c8"/><rect x="307.5" y="380" width="4.5" height="1" fill="#c8c8c8"/><rect x="307.5" y="385" width="4.5" height="1" fill="#c8c8c8"/><rect x="307.5" y="390" width="4.5" height="1" fill="#c8c8c8"/><rect x="296" y="395" width="16" height="1" fill="#c8c8c8"/><rect x="307.5" y="400" width="4.5" height="1" fill="#c8c8c8"/><rect x="307.5" y="405" width="4.5" height="1" fill="#c8c8c8"/><rect x="307.5" y="410" width="4.5" height="1" fill="#c8c8c8"/><rect x="307.5" y="415" width="4.5" height="1" fill="#c8c8c8"/><rect x="301" y="420" width="11" height="1" fill="#c8c8c8"/><rect x="307.5" y="425" width="4.5" height="1" fill="#c8c8c8"/><rect x="307.5" y="430" width="4.5" height="1" fill="#c8c8c8"/><rect x="307.5" y="435" width="4.5" height="1" fill="#c8c8c8"/><rect x="307.5" y="440" width="4.5" height="1" fill="#c8c8c8"/><rect x="296" y="445" width="16" height="1" fill="#c8c8c8"/><rect x="307.5" y="450" width="4.5" height="1" fill="#c8c8c8"/><rect x="307.5" y="455" width="4.5" height="1" fill="#c8c8c8"/><rect x="307.5" y="460" width="4.5" height="1" fill="#c8c8c8"/><rect x="307.5" y="465" width="4.5" height="1" fill="#c8c8c8"/><rect x="301" y="470" width="11" height="1" fill="#c8c8c8"/><rect x="307.5" y="475" width="4.5" height="1" fill="#c8c8c8"/><rect x="307.5" y="480" width="4.5" height="1" fill="#c8c8c8"/><rect x="307.5" y="485" width="4.5" height="1" fill="#c8c8c8"/><rect x="307.5" y="490" width="4.5" height="1" fill="#c8c8c8"/><rect x="296" y="495" width="16" height="1" fill="#c8c8c8"/><rect x="307.5" y="500" width="4.5" height="1" fill="#c8c8c8"/><rect x="307.5" y="505" width="4.5" height="1" fill="#c8c8c8"/><rect x="296" y="120.1" width="16" height="1.8" fill="#8c38c0"/><rect x="296" y="338.1" width="16" height="1.8" fill="#8c38c0"/></svg>
<div class="a" style="left:9px;top:45px;width:0;height:0"><div style="position:absolute;left:0;top:0;transform:rotate(-90deg);transform-origin:0 0;font-size:10.5px;line-height:10px;color:#c8c8c8;white-space:nowrap">-32</div></div>
<div class="a" style="left:9px;top:95px;width:0;height:0"><div style="position:absolute;left:0;top:0;transform:rotate(-90deg);transform-origin:0 0;font-size:10.5px;line-height:10px;color:#c8c8c8;white-space:nowrap">-24</div></div>
<div class="a" style="left:9px;top:145px;width:0;height:0"><div style="position:absolute;left:0;top:0;transform:rotate(-90deg);transform-origin:0 0;font-size:10.5px;line-height:10px;color:#c8c8c8;white-space:nowrap">-16</div></div>
<div class="a" style="left:9px;top:195px;width:0;height:0"><div style="position:absolute;left:0;top:0;transform:rotate(-90deg);transform-origin:0 0;font-size:10.5px;line-height:10px;color:#c8c8c8;white-space:nowrap">-8</div></div>
<div class="a" style="left:9px;top:245px;width:0;height:0"><div style="position:absolute;left:0;top:0;transform:rotate(-90deg);transform-origin:0 0;font-size:10.5px;line-height:10px;color:#c8c8c8;white-space:nowrap">0</div></div>
<div class="a" style="left:9px;top:294px;width:0;height:0"><div style="position:absolute;left:0;top:0;transform:rotate(-90deg);transform-origin:0 0;font-size:10.5px;line-height:10px;color:#c8c8c8;white-space:nowrap">8</div></div>
<div class="a" style="left:9px;top:344px;width:0;height:0"><div style="position:absolute;left:0;top:0;transform:rotate(-90deg);transform-origin:0 0;font-size:10.5px;line-height:10px;color:#c8c8c8;white-space:nowrap">16</div></div>
<div class="a" style="left:9px;top:394px;width:0;height:0"><div style="position:absolute;left:0;top:0;transform:rotate(-90deg);transform-origin:0 0;font-size:10.5px;line-height:10px;color:#c8c8c8;white-space:nowrap">24</div></div>
<div class="a" style="left:9px;top:444px;width:0;height:0"><div style="position:absolute;left:0;top:0;transform:rotate(-90deg);transform-origin:0 0;font-size:10.5px;line-height:10px;color:#c8c8c8;white-space:nowrap">32</div></div>
<div class="a" style="left:9px;top:494px;width:0;height:0"><div style="position:absolute;left:0;top:0;transform:rotate(-90deg);transform-origin:0 0;font-size:10.5px;line-height:10px;color:#c8c8c8;white-space:nowrap">40</div></div>
<svg class="a" style="left:30px;top:2px" width="17" height="17" viewBox="0 0 17 17"><g fill="none" stroke="#e8e8e8" stroke-width="1.6"><path d="M5.5 1 L8.5 3.8 L11.5 1"/><path d="M5.5 16 L8.5 13.2 L11.5 16"/><path d="M1 5.5 L3.8 8.5 L1 11.5"/><path d="M16 5.5 L13.2 8.5 L16 11.5"/></g><rect x="6.3" y="6.3" width="4.4" height="4.4" fill="#e8e8e8"/></svg>
<svg class="a" style="left:64px;top:2px" width="17" height="17" viewBox="0 0 17 17"><circle cx="8.3" cy="8.1" r="8" fill="#5a5a5a" opacity="0.6"/><circle cx="8.3" cy="8.1" r="7.1" fill="#e4e4e4"/><rect x="4.3" y="7.1" width="8" height="2.2" fill="#4a4a4a"/></svg>
<svg class="a" style="left:162px;top:2px" width="17" height="17" viewBox="0 0 17 17"><circle cx="8.2" cy="8.1" r="8" fill="#5a5a5a" opacity="0.6"/><circle cx="8.2" cy="8.1" r="7.1" fill="#e4e4e4"/><rect x="4.2" y="7.1" width="8" height="2.2" fill="#4a4a4a"/><rect x="7.1" y="4.1" width="2.2" height="8" fill="#4a4a4a"/></svg>
<div class="a" style="left:93.5px;top:0.5px;white-space:nowrap;font-size:14.8px;line-height:20px;color:#f2f2f2;text-shadow:0 0 1.5px #555,0 0 1px #555;transform:translateZ(0)">584.0 %</div>
<div class="a" style="left:1062px;top:2px;width:3px;height:490px;background:#969696;border-radius:2px;opacity:0.8"></div>
<div class="a" style="left:1060.5px;top:121px;width:5.5px;height:129px;background:#cacaca;border-radius:3px"></div>
<div class="a" style="left:25px;top:500px;width:1028px;height:3px;background:#969696;border-radius:2px;opacity:0.8"></div>
<div class="a" style="left:281px;top:498.5px;width:772px;height:6px;background:#cfcfcf;border-radius:3px"></div>

</div>

<!-- ===== OUTPUT PANEL ===== -->
<div id="bottom" class="a" style="left:296px;top:512px;width:1065px;height:283px;background:#363d4a;border-radius:4px 4px 0 0">
  <div class="a" style="left:4px;top:7px;width:988px;height:263px;background:#22262e;border-radius:3px"></div>
<div class="a" style="left:4px;top:7px;width:988px;height:262px;overflow:hidden;border-radius:3px">
<div class="m" style="left:4.399999999999977px;top:-4.5px">Set glow_enabled</div>
<div class="m" style="left:4.399999999999977px;top:12.0px">Set background_energy_multiplier</div>
<div class="m" style="left:4.399999999999977px;top:28.5px">Set glow_enabled</div>
<div class="m" style="left:4.399999999999977px;top:45.0px">Set glow_enabled</div>
<div class="m" style="left:4.399999999999977px;top:61.5px">Set glow_enabled</div>
<div class="m" style="left:4.399999999999977px;top:78.0px">Set adjustment_enabled</div>
<div class="m" style="left:4.399999999999977px;top:94.5px">Toggle Visible</div>
<div class="m" style="left:4.399999999999977px;top:111.0px">Toggle Visible</div>
<div class="m" style="left:4.399999999999977px;top:127.5px">Toggle Visible</div>
<div class="m" style="left:4.399999999999977px;top:144.0px">Toggle Visible</div>
<div class="m" style="left:4.399999999999977px;top:160.5px">Toggle Visible</div>
<div class="m" style="left:4.399999999999977px;top:177.0px">Toggle Visible</div>
<div class="m" style="left:4.399999999999977px;top:193.5px">Toggle Visible</div>
<div class="m" style="left:4.399999999999977px;top:210.0px">Toggle Visible</div>
<div class="m" style="left:4.399999999999977px;top:226.5px">Toggle Visible</div>
<div class="m" style="left:4.399999999999977px;top:243.0px">Toggle Visible</div>
</div>
<div class="a" style="left:983px;top:8px;width:5px;height:259px;background:#2b303a;border-radius:3px"></div>
<div class="a" style="left:983px;top:188px;width:5px;height:79px;background:#9a9da2;border-radius:3px"></div>
<div class="a" style="left:4px;top:274px;width:988px;height:20px;background:#22262e;border-radius:3px"></div>
<svg class="a" style="left:1005px;top:13px" width="14" height="16" viewBox="0 0 14 16"><rect x="5.8" y="0" width="2.4" height="7" fill="#e0e0e0"/><path d="M1 7.5 H13 V11 H1 Z" fill="#e0e0e0"/><path d="M1 11.8 H13 V15 L1 15.5 Z" fill="#d0d0d0"/></svg>
<svg class="a" style="left:1038px;top:13px" width="16" height="16" viewBox="0 0 16 16"><path d="M1 12 V2 Q1 1 2 1 H11" fill="none" stroke="#e0e0e0" stroke-width="1.8"/><rect x="4.5" y="4.5" width="10" height="10" fill="none" stroke="#e8e8e8" stroke-width="2.2"/></svg>
<div class="a" style="left:1005px;top:39px;width:56px;height:1px;background:#4f555e"></div>
<div class="a" style="left:1005px;top:77.5px;width:56px;height:1px;background:#4f555e"></div>
<svg class="a" style="left:1004px;top:52px" width="16" height="15" viewBox="0 0 16 15"><path d="M3 14 V3 M0.5 5.5 L3 2.5 L5.5 5.5" fill="none" stroke="#e0e0e0" stroke-width="1.7"/><rect x="1" y="1" width="14" height="1.8" fill="#e0e0e0"/><rect x="7" y="6" width="8" height="1.8" fill="#e0e0e0"/><rect x="7" y="11" width="8" height="1.8" fill="#e0e0e0"/></svg>
<div class="a" style="left:1031px;top:45px;width:30px;height:28px;background:#22262e;border-radius:4px"></div>
<svg class="a" style="left:1037px;top:50px" width="17" height="17" viewBox="0 0 17 17"><circle cx="6.8" cy="6.6" r="4.4" fill="none" stroke="#70bafa" stroke-width="2"/><path d="M9.8 9.6 L14.5 14.3" stroke="#70bafa" stroke-width="2.3"/></svg>
<div class="a" style="left:994px;top:84px;width:67px;height:32px;background:#22262e;border-radius:4px;border-bottom:2px solid #70bafa"></div>
<div class="a" style="left:994px;top:121px;width:67px;height:32px;background:#22262e;border-radius:4px;border-bottom:2px solid #70bafa"></div>
<div class="a" style="left:994px;top:194px;width:67px;height:32px;background:#22262e;border-radius:4px;border-bottom:2px solid #70bafa"></div>
<svg class="a" style="left:1005px;top:92px" width="15" height="15" viewBox="0 0 15 15"><rect x="0.5" y="0.5" width="14" height="14" rx="2.5" fill="#e0e0e0"/><rect x="6.3" y="2.5" width="2.4" height="6.5" fill="#22262e"/><rect x="6.3" y="10.5" width="2.4" height="2.4" fill="#22262e"/></svg>
<svg class="a" style="left:1004.5px;top:129px" width="15" height="15" viewBox="0 0 15 15"><circle cx="7.5" cy="7.5" r="7.3" fill="#e56f5f"/><path d="M4.3 4.3 L10.7 10.7 M10.7 4.3 L4.3 10.7" stroke="#22262e" stroke-width="2"/></svg>
<svg class="a" style="left:1004.5px;top:165.5px" width="15" height="15" viewBox="0 0 15 15"><circle cx="7.5" cy="7.5" r="7.3" fill="#b39a52"/><rect x="6.4" y="2.8" width="2.2" height="6" fill="#363d4a"/><rect x="6.4" y="10" width="2.2" height="2.2" fill="#363d4a"/></svg>
<svg class="a" style="left:1008px;top:202px" width="10" height="16" viewBox="0 0 10 16"><rect x="2" y="0" width="6" height="3" rx="1" fill="#e0e0e0"/><path d="M2 4 H8 V11.5 L5 15.5 L2 11.5 Z" fill="#e0e0e0"/><rect x="4.2" y="5" width="1.6" height="6" fill="#22262e"/></svg>
<div class="t" style="left:1035px;top:89.5px;font-size:14.40px;color:#70bafa;transform:scaleX(1.1111);transform-origin:0 50%">7</div>
<div class="t" style="left:1035px;top:126.5px;font-size:14.40px;color:#70bafa;transform:scaleX(1.1111);transform-origin:0 50%">0</div>
<div class="t" style="left:1035px;top:163px;font-size:14.40px;color:#d4d6d9;transform:scaleX(1.1111);transform-origin:0 50%">0</div>
<div class="t" style="left:1031px;top:200px;font-size:14.40px;color:#70bafa;transform:scaleX(1.1111);transform-origin:0 50%">16</div>

</div>

<!-- ===== INSPECTOR ===== -->
<div class="a" style="left:1365px;top:0px;width:235px;height:795px;background:#363d4a"></div>
<div class="a" style="left:1596px;top:0px;width:4px;height:795px;background:#1e2229"></div>
<div class="a" style="left:1370px;top:-5px;width:187px;height:10.5px;background:#22262e;border-radius:3px"></div>
<div class="a" style="left:1370px;top:10px;width:187px;height:32px;background:#22262e;border-radius:3px"></div>
<div class="t" style="left:1376px;top:17.0px;font-size:14.40px;color:#c4c6c9;;transform:scaleX(1.1111);transform-origin:0 50%">Filter Properties</div>
<svg class="a" style="left:1533px;top:17px" width="18" height="18" viewBox="0 0 18 18"><circle cx="7.1" cy="6.9" r="4.5" fill="none" stroke="#e6e6e6" stroke-width="2"/><path d="M10.2 10 L15.3 15" stroke="#e6e6e6" stroke-width="2.2"/></svg>
<svg class="a" style="left:1569px;top:17px" width="16" height="18" viewBox="0 0 16 18"><path d="M3.8 1.5 V9" stroke="#e6e6e6" stroke-width="1.8"/><circle cx="3.8" cy="2.8" r="1.5" fill="#e6e6e6"/><path d="M1.3 9.5 H6.3 V14.5 Q6.3 17 3.8 17 Q1.3 17 1.3 14.5 Z" fill="#e0e0e0"/><path d="M11.3 8 V16.5" stroke="#e6e6e6" stroke-width="2.2"/><path d="M8.5 2 Q7.8 8.5 11.3 8.5 Q14.8 8.5 14.1 2 L13 2 V5.2 H9.6 V2 Z" fill="#e6e6e6"/></svg>
<div class="a" style="left:1369.5px;top:47px;width:222px;height:760px;background:#22262e;border-radius:4px"></div>
<div class="a" style="left:1374px;top:47px;width:200.5px;height:727px;background:#2e3440;border-left:2px solid #5b8cc9;border-right:2px solid #5b8cc9;border-bottom:2px solid #5b8cc9;border-radius:0 0 4px 4px"></div>
<div class="a" style="left:1579px;top:55px;width:4px;height:740px;background:#595d63;border-radius:2px"></div>
<div class="a" style="left:1577.5px;top:199px;width:6.5px;height:528px;background:#a9a9a9;border-radius:3px"></div>
<svg class="a" style="left:1383px;top:57.6px" width="8" height="10" viewBox="0 0 8 10"><path d="M1.5 1 L5.8 5 L1.5 9" fill="none" stroke="#b5b7ba" stroke-width="1.8"/></svg>
<div class="t" style="left:1395px;top:52.6px;font-size:14.04px;color:#e2e4e6;font-weight:bold;;transform:scaleX(1.1111);transform-origin:0 50%">Reflected Light</div>
<svg class="a" style="left:1383px;top:83.7px" width="8" height="10" viewBox="0 0 8 10"><path d="M1.5 1 L5.8 5 L1.5 9" fill="none" stroke="#b5b7ba" stroke-width="1.8"/></svg>
<div class="t" style="left:1395px;top:78.7px;font-size:14.04px;color:#e2e4e6;font-weight:bold;;transform:scaleX(1.1111);transform-origin:0 50%">Tonemap</div>
<svg class="a" style="left:1383px;top:110px" width="8" height="10" viewBox="0 0 8 10"><path d="M1.5 1 L5.8 5 L1.5 9" fill="none" stroke="#b5b7ba" stroke-width="1.8"/></svg>
<div class="t" style="left:1395px;top:105.0px;font-size:14.04px;color:#e2e4e6;font-weight:bold;;transform:scaleX(1.1111);transform-origin:0 50%">SSR</div>
<svg class="a" style="left:1383px;top:136px" width="8" height="10" viewBox="0 0 8 10"><path d="M1.5 1 L5.8 5 L1.5 9" fill="none" stroke="#b5b7ba" stroke-width="1.8"/></svg>
<div class="t" style="left:1395px;top:131.0px;font-size:14.04px;color:#e2e4e6;font-weight:bold;;transform:scaleX(1.1111);transform-origin:0 50%">SSAO</div>
<svg class="a" style="left:1383px;top:162.2px" width="8" height="10" viewBox="0 0 8 10"><path d="M1.5 1 L5.8 5 L1.5 9" fill="none" stroke="#b5b7ba" stroke-width="1.8"/></svg>
<div class="t" style="left:1395px;top:157.2px;font-size:14.04px;color:#e2e4e6;font-weight:bold;;transform:scaleX(1.1111);transform-origin:0 50%">SSIL</div>
<svg class="a" style="left:1383px;top:188.4px" width="8" height="10" viewBox="0 0 8 10"><path d="M1.5 1 L5.8 5 L1.5 9" fill="none" stroke="#b5b7ba" stroke-width="1.8"/></svg>
<div class="t" style="left:1395px;top:183.4px;font-size:14.04px;color:#e2e4e6;font-weight:bold;;transform:scaleX(1.1111);transform-origin:0 50%">SDFGI</div>
<svg class="a" style="left:1382px;top:217px" width="10" height="8" viewBox="0 0 10 8"><path d="M1 1.5 L5 5.8 L9 1.5" fill="none" stroke="#b5b7ba" stroke-width="1.8"/></svg>
<div class="t" style="left:1395px;top:210.3px;font-size:14.04px;color:#e2e4e6;font-weight:bold;;transform:scaleX(1.1111);transform-origin:0 50%">Glow</div>
<svg class="a" style="left:1396px;top:278px" width="8" height="10" viewBox="0 0 8 10"><path d="M1.5 1 L5.8 5 L1.5 9" fill="none" stroke="#b5b7ba" stroke-width="1.8"/></svg>
<div class="t" style="left:1408px;top:272.8px;font-size:14.04px;color:#e2e4e6;font-weight:bold;;transform:scaleX(1.1111);transform-origin:0 50%">Levels</div>
<div class="t" style="left:1399.5px;top:239.0px;font-size:14.40px;color:#b9bbbe;;transform:scaleX(1.1111);transform-origin:0 50%">Enable</div>
<svg class="a" style="left:1455px;top:242px" width="16" height="16" viewBox="0 0 16 16"><path d="M4.5 4.2 A5.6 5.6 0 1 1 4 12" fill="none" stroke="#e2e2e2" stroke-width="2"/><path d="M1 3.2 L6.8 2.6 L6 8.5 Z" fill="#e2e2e2"/></svg>
<div class="a" style="left:1480.5px;top:234px;width:89.5px;height:32px;background:#1f2228;border-radius:4px"></div>
<svg class="a" style="left:1488px;top:242px" width="15" height="15" viewBox="0 0 15 15"><rect x="0" y="0" width="15" height="15" rx="2" fill="#70b2f0"/><path d="M3.2 7.5 L6.2 10.5 L11.8 4.3" fill="none" stroke="#fff" stroke-width="2"/></svg>
<div class="t" style="left:1512.5px;top:241.5px;font-size:14.40px;color:#75b8f8;;transform:scaleX(1.1111);transform-origin:0 50%">On</div>
<div class="t" style="left:1399.5px;top:306.0px;font-size:14.40px;color:#b9bbbe;;transform:scaleX(1.1111);transform-origin:0 50%">Normal</div>
<svg class="a" style="left:1455px;top:309px" width="16" height="16" viewBox="0 0 16 16"><path d="M4.5 4.2 A5.6 5.6 0 1 1 4 12" fill="none" stroke="#e2e2e2" stroke-width="2"/><path d="M1 3.2 L6.8 2.6 L6 8.5 Z" fill="#e2e2e2"/></svg>
<div class="a" style="left:1480.5px;top:301px;width:89.5px;height:32px;background:#1f2228;border-radius:4px"></div>
<svg class="a" style="left:1488px;top:309px" width="15" height="15" viewBox="0 0 15 15"><rect x="0" y="0" width="15" height="15" rx="2" fill="#70b2f0"/><path d="M3.2 7.5 L6.2 10.5 L11.8 4.3" fill="none" stroke="#fff" stroke-width="2"/></svg>
<div class="t" style="left:1512.5px;top:308.5px;font-size:14.40px;color:#75b8f8;;transform:scaleX(1.1111);transform-origin:0 50%">On</div>
<div class="t" style="left:1399.5px;top:343.0px;font-size:14.40px;color:#b9bbbe;;transform:scaleX(1.1111);transform-origin:0 50%">Intensity</div>
<div class="a" style="left:1480.5px;top:338px;width:89.5px;height:32px;background:#1f2228;border-radius:4px"></div>
<div class="t" style="left:1498px;top:343.0px;font-size:14.40px;color:#e6e8ea;;transform:scaleX(1.1111);transform-origin:0 50%">0.8</div>
<div class="a" style="left:1487px;top:364px;width:72.5px;height:2px;background:#53575d;border-radius:1px"></div>
<div class="a" style="left:1487px;top:364px;width:8.700000000000045px;height:2px;background:#b8b8b8;border-radius:1px"></div>
<div class="a" style="left:1493.7px;top:362.5px;width:5px;height:5px;background:#c8c8c8;border-radius:1px"></div>
<div class="t" style="left:1399.5px;top:380.0px;font-size:14.40px;color:#b9bbbe;;transform:scaleX(1.1111);transform-origin:0 50%">Strengt</div>
<svg class="a" style="left:1455px;top:383px" width="16" height="16" viewBox="0 0 16 16"><path d="M4.5 4.2 A5.6 5.6 0 1 1 4 12" fill="none" stroke="#e2e2e2" stroke-width="2"/><path d="M1 3.2 L6.8 2.6 L6 8.5 Z" fill="#e2e2e2"/></svg>
<div class="a" style="left:1480.5px;top:375px;width:89.5px;height:32px;background:#1f2228;border-radius:4px"></div>
<div class="t" style="left:1498px;top:380.0px;font-size:14.40px;color:#e6e8ea;;transform:scaleX(1.1111);transform-origin:0 50%">1.35</div>
<div class="a" style="left:1487px;top:401px;width:72.5px;height:2px;background:#53575d;border-radius:1px"></div>
<div class="a" style="left:1487px;top:401px;width:50.02500000000009px;height:2px;background:#b8b8b8;border-radius:1px"></div>
<div class="a" style="left:1535.025px;top:399.5px;width:5px;height:5px;background:#c8c8c8;border-radius:1px"></div>
<div class="t" style="left:1399.5px;top:417.0px;font-size:14.40px;color:#b9bbbe;;transform:scaleX(1.1111);transform-origin:0 50%">Bloom</div>
<svg class="a" style="left:1455px;top:420px" width="16" height="16" viewBox="0 0 16 16"><path d="M4.5 4.2 A5.6 5.6 0 1 1 4 12" fill="none" stroke="#e2e2e2" stroke-width="2"/><path d="M1 3.2 L6.8 2.6 L6 8.5 Z" fill="#e2e2e2"/></svg>
<div class="a" style="left:1480.5px;top:412px;width:89.5px;height:32px;background:#1f2228;border-radius:4px"></div>
<div class="t" style="left:1498px;top:417.0px;font-size:14.40px;color:#e6e8ea;;transform:scaleX(1.1111);transform-origin:0 50%">1.0</div>
<div class="a" style="left:1487px;top:438px;width:72.5px;height:2px;background:#53575d;border-radius:1px"></div>
<div class="a" style="left:1487px;top:438px;width:72.5px;height:2px;background:#b8b8b8;border-radius:1px"></div>
<div class="a" style="left:1557.5px;top:436.5px;width:5px;height:5px;background:#c8c8c8;border-radius:1px"></div>
<div class="t" style="left:1399.5px;top:454.0px;font-size:14.40px;color:#b9bbbe;;transform:scaleX(1.1111);transform-origin:0 50%">Blend Mod</div>
<div class="a" style="left:1480.5px;top:449px;width:89.5px;height:32px;background:#1f2228;border-radius:4px"></div>
<div class="t" style="left:1487px;top:456.0px;font-size:14.40px;color:#e6e8ea;;transform:scaleX(1.1111);transform-origin:0 50%">Softlight</div>
<svg class="a" style="left:1553px;top:461px" width="12" height="8" viewBox="0 0 12 8"><path d="M1 1.5 L6 6.5 L11 1.5" fill="none" stroke="#e0e0e0" stroke-width="1.9"/></svg>
<div class="t" style="left:1399.5px;top:491.0px;font-size:14.40px;color:#b9bbbe;;transform:scaleX(1.1111);transform-origin:0 50%">HDR Th</div>
<svg class="a" style="left:1455px;top:494px" width="16" height="16" viewBox="0 0 16 16"><path d="M4.5 4.2 A5.6 5.6 0 1 1 4 12" fill="none" stroke="#e2e2e2" stroke-width="2"/><path d="M1 3.2 L6.8 2.6 L6 8.5 Z" fill="#e2e2e2"/></svg>
<div class="a" style="left:1480.5px;top:486px;width:89.5px;height:32px;background:#1f2228;border-radius:4px"></div>
<div class="t" style="left:1498px;top:491.0px;font-size:14.40px;color:#e6e8ea;;transform:scaleX(1.1111);transform-origin:0 50%">0.44</div>
<div class="a" style="left:1487px;top:512px;width:72.5px;height:2px;background:#53575d;border-radius:1px"></div>
<div class="a" style="left:1487px;top:512px;width:8.700000000000045px;height:2px;background:#b8b8b8;border-radius:1px"></div>
<div class="a" style="left:1493.7px;top:510.5px;width:5px;height:5px;background:#c8c8c8;border-radius:1px"></div>
<div class="t" style="left:1399.5px;top:527.5px;font-size:14.40px;color:#b9bbbe;;transform:scaleX(1.1111);transform-origin:0 50%">HDR Scale</div>
<div class="a" style="left:1480.5px;top:522.5px;width:89.5px;height:32px;background:#1f2228;border-radius:4px"></div>
<div class="t" style="left:1498px;top:527.5px;font-size:14.40px;color:#e6e8ea;;transform:scaleX(1.1111);transform-origin:0 50%">2.0</div>
<div class="a" style="left:1487px;top:548.5px;width:72.5px;height:2px;background:#53575d;border-radius:1px"></div>
<div class="a" style="left:1487px;top:548.5px;width:36.25px;height:2px;background:#b8b8b8;border-radius:1px"></div>
<div class="a" style="left:1521.25px;top:547.0px;width:5px;height:5px;background:#c8c8c8;border-radius:1px"></div>
<div class="t" style="left:1399.5px;top:564.5px;font-size:14.40px;color:#b9bbbe;;transform:scaleX(1.1111);transform-origin:0 50%">HDR Lumi</div>
<div class="a" style="left:1480.5px;top:559.5px;width:89.5px;height:32px;background:#1f2228;border-radius:4px"></div>
<div class="t" style="left:1498px;top:564.5px;font-size:14.40px;color:#e6e8ea;;transform:scaleX(1.1111);transform-origin:0 50%">12.0</div>
<div class="a" style="left:1487px;top:585.5px;width:72.5px;height:2px;background:#53575d;border-radius:1px"></div>
<div class="a" style="left:1487px;top:585.5px;width:4.349999999999909px;height:2px;background:#b8b8b8;border-radius:1px"></div>
<div class="a" style="left:1489.35px;top:584.0px;width:5px;height:5px;background:#c8c8c8;border-radius:1px"></div>
<div class="t" style="left:1399.5px;top:601.5px;font-size:14.40px;color:#b9bbbe;;transform:scaleX(1.1111);transform-origin:0 50%">Map Stren</div>
<div class="a" style="left:1480.5px;top:596.5px;width:89.5px;height:32px;background:#1f2228;border-radius:4px"></div>
<div class="t" style="left:1498px;top:601.5px;font-size:14.40px;color:#e6e8ea;;transform:scaleX(1.1111);transform-origin:0 50%">0.8</div>
<div class="a" style="left:1487px;top:622.5px;width:72.5px;height:2px;background:#53575d;border-radius:1px"></div>
<div class="a" style="left:1487px;top:622.5px;width:58.0px;height:2px;background:#b8b8b8;border-radius:1px"></div>
<div class="a" style="left:1543.0px;top:621.0px;width:5px;height:5px;background:#c8c8c8;border-radius:1px"></div>
<div class="a" style="left:1376px;top:633px;width:104.5px;height:31.5px;background:#303641"></div>
<div class="t" style="left:1399.5px;top:638.0px;font-size:14.40px;color:#b9bbbe;;transform:scaleX(1.1111);transform-origin:0 50%">Map</div>
<div class="a" style="left:1480.5px;top:633px;width:89.5px;height:32px;background:#1f2228;border-radius:4px"></div>
<div class="a" style="left:1542px;top:633px;width:28px;height:32px;background:#23272e;border-radius:0 4px 4px 0"></div>
<div class="t" style="left:1487px;top:640.0px;font-size:14.40px;color:#e6e8ea;;transform:scaleX(1.1111);transform-origin:0 50%">&lt;empt</div>
<svg class="a" style="left:1550px;top:646px" width="11" height="7" viewBox="0 0 11 7"><path d="M1 1.2 L5.5 5.7 L10 1.2" fill="none" stroke="#e0e0e0" stroke-width="1.9"/></svg>
<svg class="a" style="left:1383px;top:672.2px" width="8" height="10" viewBox="0 0 8 10"><path d="M1.5 1 L5.8 5 L1.5 9" fill="none" stroke="#b5b7ba" stroke-width="1.8"/></svg>
<div class="t" style="left:1395px;top:667.2px;font-size:14.04px;color:#e2e4e6;font-weight:bold;;transform:scaleX(1.1111);transform-origin:0 50%">Fog</div>
<svg class="a" style="left:1383px;top:698.5px" width="8" height="10" viewBox="0 0 8 10"><path d="M1.5 1 L5.8 5 L1.5 9" fill="none" stroke="#b5b7ba" stroke-width="1.8"/></svg>
<div class="t" style="left:1395px;top:693.5px;font-size:14.04px;color:#e2e4e6;font-weight:bold;;transform:scaleX(1.1111);transform-origin:0 50%">Volumetric Fog</div>
<svg class="a" style="left:1383px;top:724.6px" width="8" height="10" viewBox="0 0 8 10"><path d="M1.5 1 L5.8 5 L1.5 9" fill="none" stroke="#b5b7ba" stroke-width="1.8"/></svg>
<div class="t" style="left:1395px;top:719.6px;font-size:14.04px;color:#e2e4e6;font-weight:bold;;transform:scaleX(1.1111);transform-origin:0 50%">Adjustments</div>
<svg class="a" style="left:1383px;top:750.5px" width="8" height="10" viewBox="0 0 8 10"><path d="M1.5 1 L5.8 5 L1.5 9" fill="none" stroke="#b5b7ba" stroke-width="1.8"/></svg>
<div class="t" style="left:1395px;top:745.5px;font-size:14.04px;color:#e2e4e6;font-weight:bold;;transform:scaleX(1.1111);transform-origin:0 50%">Resource</div>
<div class="t" style="left:1495px;top:746.5px;font-size:13.77px;color:#9c9ea2;;transform:scaleX(1.1111);transform-origin:0 50%">(1 change)</div>
<div class="t" style="left:1382.5px;top:778.5px;font-size:14.40px;color:#b9bbbe;;transform:scaleX(1.1111);transform-origin:0 50%">Camera Attr</div>
<div class="a" style="left:1480.5px;top:776px;width:90px;height:32px;background:#1f2228;border-radius:4px"></div>
<div class="a" style="left:1542px;top:776px;width:28px;height:32px;background:#23272e;border-radius:0 4px 4px 0"></div>
<div class="t" style="left:1481px;top:779.5px;font-size:14.40px;color:#e6e8ea;;transform:scaleX(1.1111);transform-origin:0 50%">&lt;empty</div>
<svg class="a" style="left:1550px;top:785px" width="11" height="7" viewBox="0 0 11 7"><path d="M1 1.2 L5.5 5.7 L10 1.2" fill="none" stroke="#e0e0e0" stroke-width="1.9"/></svg>

<!-- ===== DEBUG WINDOW ===== -->
<div id="debugwin" class="a" style="left:686px;top:381px;width:615px;height:376px;border-radius:10px;overflow:hidden;background:linear-gradient(100deg,#8b8b8b 0%,#878888 50%,#7f8384 100%);box-shadow:0 0 0 1px rgba(165,165,165,0.55),0 2px 22px rgba(0,0,0,0.28)">
<div class="a" style="left:0px;top:0px;width:615px;height:31px;background:#141414;box-shadow:inset 0 1.5px 0 #4e4e4e,inset 1.5px 0 0 #4a4a4a,inset -1.5px 0 0 #4a4a4a"></div>
<div class="a" style="left:9.0px;top:9.5px;width:13px;height:13px;background:#3d3d3d;border-radius:50%"></div>
<div class="a" style="left:30.299999999999955px;top:9.5px;width:13px;height:13px;background:#3d3d3d;border-radius:50%"></div>
<div class="a" style="left:51.39999999999998px;top:9.5px;width:13px;height:13px;background:#3d3d3d;border-radius:50%"></div>
<div class="t b" style="left:0;width:615px;text-align:center;top:5.5px;font-size:12.91px;color:#7f7f7f;transform:scaleX(1.1111);transform-origin:50% 50%">spacetime (DEBUG)</div>
<div class="a" style="left:0px;top:31px;width:2px;height:345px;background:#a8a8a8;opacity:0.6"></div>
<div class="a" style="left:181px;top:36.60000000000002px;width:53.5px;height:15.8px;background:#6a6a6a;border-radius:2px;box-shadow:inset 0 -1px 0 #5a5a5a"></div>
<div class="t2" style="position:absolute;white-space:nowrap;font-weight:bold;left:183.5px;top:38.60000000000002px;font-size:8.9px;line-height:12px;color:#f2f2f2;transform:scaleX(0.95);transform-origin:0 50%">Start Server</div>
<div class="a" style="left:236.39999999999998px;top:36.60000000000002px;width:48.60000000000002px;height:15.8px;background:#6a6a6a;border-radius:2px;box-shadow:inset 0 -1px 0 #5a5a5a"></div>
<div class="t2" style="position:absolute;white-space:nowrap;font-weight:bold;left:238.89999999999998px;top:38.60000000000002px;font-size:8.9px;line-height:12px;color:#f2f2f2;transform:scaleX(0.95);transform-origin:0 50%">Join Server</div>
<div class="a" style="left:287.5px;top:36.60000000000002px;width:36.0px;height:15.8px;background:#6a6a6a;border-radius:2px;box-shadow:inset 0 -1px 0 #5a5a5a"></div>
<div class="t2" style="position:absolute;white-space:nowrap;font-weight:bold;left:290.0px;top:38.60000000000002px;font-size:8.9px;line-height:12px;color:#f2f2f2;transform:scaleX(0.95);transform-origin:0 50%">127.0.0.</div>
<div class="a" style="left:325.5px;top:36.60000000000002px;width:36.5px;height:15.8px;background:#6a6a6a;border-radius:2px;box-shadow:inset 0 -1px 0 #5a5a5a"></div>
<div class="t2" style="position:absolute;white-space:nowrap;font-weight:bold;left:328.5px;top:38.60000000000002px;font-size:8.9px;line-height:12px;color:#f2f2f2;transform:scaleX(0.95);transform-origin:0 50%">1234</div>
<div class="a" style="left:364px;top:36.60000000000002px;width:31px;height:15.8px;background:#6a6a6a;border-radius:2px;box-shadow:inset 0 -1px 0 #5a5a5a"></div>
<div class="t2" style="position:absolute;white-space:nowrap;font-weight:bold;left:366.5px;top:38.60000000000002px;font-size:8.9px;line-height:12px;color:#f2f2f2;transform:scaleX(0.95);transform-origin:0 50%">Status</div>
<div class="a" style="left:401px;top:32px;width:50px;height:26.6px;background:#0000f2"></div>
<div class="a" style="left:451px;top:32px;width:164px;height:26.6px;background:linear-gradient(90deg,#78f54f 0%,#76f04d 35%,#62c83f 75%,#55aa38 100%)"></div>
<div class="a" style="left:43px;top:73px;width:529px;height:256px;background:#000"></div>
<div class="a" style="left:36px;top:66px;width:543px;height:270px;box-shadow:0 0 5px 1px rgba(80,200,250,0.45)"></div>
<div class="a" style="left:41px;top:66px;width:533px;height:5.5px;background:linear-gradient(180deg,#70f2ff,#4cb2e6)"></div>
<div class="a" style="left:41px;top:330.5px;width:533px;height:5.5px;background:linear-gradient(180deg,#70f2ff,#4cb2e6)"></div>
<div class="a" style="left:36px;top:72px;width:5.5px;height:258.5px;background:linear-gradient(90deg,#4cb2e6,#70f2ff)"></div>
<div class="a" style="left:574px;top:72px;width:5.5px;height:258.5px;background:linear-gradient(90deg,#4cb2e6,#70f2ff)"></div>
<div class="a" style="left:34.5px;top:64.5px;width:8.6px;height:8.6px;background:#49acdf"></div>
<div class="a" style="left:34.5px;top:329.20000000000005px;width:8.6px;height:8.6px;background:#49acdf"></div>
<div class="a" style="left:572.7px;top:64.5px;width:8.6px;height:8.6px;background:#49acdf"></div>
<div class="a" style="left:572.7px;top:329.20000000000005px;width:8.6px;height:8.6px;background:#49acdf"></div>
<div class="a" style="left:164.0px;top:64.80000000000001px;width:7.3px;height:8px;background:#49acdf"></div>
<div class="a" style="left:171.70000000000005px;top:64.80000000000001px;width:7.3px;height:8px;background:#49acdf"></div>
<div class="a" style="left:164.0px;top:329.5px;width:7.3px;height:8px;background:#49acdf"></div>
<div class="a" style="left:171.70000000000005px;top:329.5px;width:7.3px;height:8px;background:#49acdf"></div>
<div class="a" style="left:300.0px;top:64.80000000000001px;width:7.3px;height:8px;background:#49acdf"></div>
<div class="a" style="left:307.70000000000005px;top:64.80000000000001px;width:7.3px;height:8px;background:#49acdf"></div>
<div class="a" style="left:300.0px;top:329.5px;width:7.3px;height:8px;background:#49acdf"></div>
<div class="a" style="left:307.70000000000005px;top:329.5px;width:7.3px;height:8px;background:#49acdf"></div>
<div class="a" style="left:437.0px;top:64.80000000000001px;width:7.3px;height:8px;background:#49acdf"></div>
<div class="a" style="left:444.70000000000005px;top:64.80000000000001px;width:7.3px;height:8px;background:#49acdf"></div>
<div class="a" style="left:437.0px;top:329.5px;width:7.3px;height:8px;background:#49acdf"></div>
<div class="a" style="left:444.70000000000005px;top:329.5px;width:7.3px;height:8px;background:#49acdf"></div>
<div class="a" style="left:34.5px;top:190.5px;width:8.6px;height:6px;background:#49acdf"></div>
<div class="a" style="left:34.5px;top:197px;width:8.6px;height:6px;background:#49acdf"></div>
<div class="a" style="left:572.7px;top:190.5px;width:8.6px;height:6px;background:#49acdf"></div>
<div class="a" style="left:572.7px;top:197px;width:8.6px;height:6px;background:#49acdf"></div>
<svg class="a" style="left:256.5px;top:116px" width="102" height="162" viewBox="0 0 102 161.5"><rect x="-0.3" y="-0.3" width="9.1" height="9.1" fill="#4aa8dd"/><rect x="1.5" y="1.5" width="5.5" height="5.5" fill="#50b0e4"/><rect x="8.2" y="-0.3" width="9.1" height="9.1" fill="#4aa8dd"/><rect x="10.0" y="1.5" width="5.5" height="5.5" fill="#50b0e4"/><rect x="84.7" y="-0.3" width="9.1" height="9.1" fill="#4aa8dd"/><rect x="86.5" y="1.5" width="5.5" height="5.5" fill="#50b0e4"/><rect x="93.2" y="-0.3" width="9.1" height="9.1" fill="#4aa8dd"/><rect x="95.0" y="1.5" width="5.5" height="5.5" fill="#50b0e4"/><rect x="-0.3" y="8.2" width="9.1" height="9.1" fill="#4aa8dd"/><rect x="1.5" y="10.0" width="5.5" height="5.5" fill="#50b0e4"/><rect x="8.2" y="8.2" width="9.1" height="9.1" fill="#4aa8dd"/><rect x="10.0" y="10.0" width="5.5" height="5.5" fill="#50b0e4"/><rect x="84.7" y="8.2" width="9.1" height="9.1" fill="#4aa8dd"/><rect x="86.5" y="10.0" width="5.5" height="5.5" fill="#50b0e4"/><rect x="93.2" y="8.2" width="9.1" height="9.1" fill="#4aa8dd"/><rect x="95.0" y="10.0" width="5.5" height="5.5" fill="#50b0e4"/><rect x="-0.3" y="16.7" width="9.1" height="9.1" fill="#4aa8dd"/><rect x="1.5" y="18.5" width="5.5" height="5.5" fill="#50b0e4"/><rect x="8.2" y="16.7" width="9.1" height="9.1" fill="#4aa8dd"/><rect x="10.0" y="18.5" width="5.5" height="5.5" fill="#50b0e4"/><rect x="84.7" y="16.7" width="9.1" height="9.1" fill="#4aa8dd"/><rect x="86.5" y="18.5" width="5.5" height="5.5" fill="#50b0e4"/><rect x="93.2" y="16.7" width="9.1" height="9.1" fill="#4aa8dd"/><rect x="95.0" y="18.5" width="5.5" height="5.5" fill="#50b0e4"/><rect x="-0.3" y="25.2" width="9.1" height="9.1" fill="#4aa8dd"/><rect x="1.5" y="27.0" width="5.5" height="5.5" fill="#50b0e4"/><rect x="8.2" y="25.2" width="9.1" height="9.1" fill="#4aa8dd"/><rect x="10.0" y="27.0" width="5.5" height="5.5" fill="#50b0e4"/><rect x="84.7" y="25.2" width="9.1" height="9.1" fill="#4aa8dd"/><rect x="86.5" y="27.0" width="5.5" height="5.5" fill="#50b0e4"/><rect x="93.2" y="25.2" width="9.1" height="9.1" fill="#4aa8dd"/><rect x="95.0" y="27.0" width="5.5" height="5.5" fill="#50b0e4"/><rect x="-0.3" y="33.7" width="9.1" height="9.1" fill="#4aa8dd"/><rect x="1.5" y="35.5" width="5.5" height="5.5" fill="#50b0e4"/><rect x="8.2" y="33.7" width="9.1" height="9.1" fill="#4aa8dd"/><rect x="10.0" y="35.5" width="5.5" height="5.5" fill="#50b0e4"/><rect x="84.7" y="33.7" width="9.1" height="9.1" fill="#4aa8dd"/><rect x="86.5" y="35.5" width="5.5" height="5.5" fill="#50b0e4"/><rect x="93.2" y="33.7" width="9.1" height="9.1" fill="#4aa8dd"/><rect x="95.0" y="35.5" width="5.5" height="5.5" fill="#50b0e4"/><rect x="-0.3" y="42.2" width="9.1" height="9.1" fill="#4aa8dd"/><rect x="1.5" y="44.0" width="5.5" height="5.5" fill="#50b0e4"/><rect x="8.2" y="42.2" width="9.1" height="9.1" fill="#4aa8dd"/><rect x="10.0" y="44.0" width="5.5" height="5.5" fill="#50b0e4"/><rect x="84.7" y="42.2" width="9.1" height="9.1" fill="#4aa8dd"/><rect x="86.5" y="44.0" width="5.5" height="5.5" fill="#50b0e4"/><rect x="93.2" y="42.2" width="9.1" height="9.1" fill="#4aa8dd"/><rect x="95.0" y="44.0" width="5.5" height="5.5" fill="#50b0e4"/><rect x="-0.3" y="50.7" width="9.1" height="9.1" fill="#4aa8dd"/><rect x="1.5" y="52.5" width="5.5" height="5.5" fill="#50b0e4"/><rect x="8.2" y="50.7" width="9.1" height="9.1" fill="#4aa8dd"/><rect x="10.0" y="52.5" width="5.5" height="5.5" fill="#50b0e4"/><rect x="84.7" y="50.7" width="9.1" height="9.1" fill="#4aa8dd"/><rect x="86.5" y="52.5" width="5.5" height="5.5" fill="#50b0e4"/><rect x="93.2" y="50.7" width="9.1" height="9.1" fill="#4aa8dd"/><rect x="95.0" y="52.5" width="5.5" height="5.5" fill="#50b0e4"/><rect x="-0.3" y="59.2" width="9.1" height="9.1" fill="#4aa8dd"/><rect x="1.5" y="61.0" width="5.5" height="5.5" fill="#50b0e4"/><rect x="8.2" y="59.2" width="9.1" height="9.1" fill="#4aa8dd"/><rect x="10.0" y="61.0" width="5.5" height="5.5" fill="#50b0e4"/><rect x="84.7" y="59.2" width="9.1" height="9.1" fill="#4aa8dd"/><rect x="86.5" y="61.0" width="5.5" height="5.5" fill="#50b0e4"/><rect x="93.2" y="59.2" width="9.1" height="9.1" fill="#4aa8dd"/><rect x="95.0" y="61.0" width="5.5" height="5.5" fill="#50b0e4"/><rect x="-0.3" y="67.7" width="9.1" height="9.1" fill="#4aa8dd"/><rect x="1.5" y="69.5" width="5.5" height="5.5" fill="#50b0e4"/><rect x="8.2" y="67.7" width="9.1" height="9.1" fill="#4aa8dd"/><rect x="10.0" y="69.5" width="5.5" height="5.5" fill="#50b0e4"/><rect x="16.7" y="67.7" width="9.1" height="9.1" fill="#4aa8dd"/><rect x="18.5" y="69.5" width="5.5" height="5.5" fill="#50b0e4"/><rect x="76.2" y="67.7" width="9.1" height="9.1" fill="#4aa8dd"/><rect x="78.0" y="69.5" width="5.5" height="5.5" fill="#50b0e4"/><rect x="84.7" y="67.7" width="9.1" height="9.1" fill="#4aa8dd"/><rect x="86.5" y="69.5" width="5.5" height="5.5" fill="#50b0e4"/><rect x="93.2" y="67.7" width="9.1" height="9.1" fill="#4aa8dd"/><rect x="95.0" y="69.5" width="5.5" height="5.5" fill="#50b0e4"/><rect x="8.2" y="76.2" width="9.1" height="9.1" fill="#4aa8dd"/><rect x="10.0" y="78.0" width="5.5" height="5.5" fill="#50b0e4"/><rect x="16.7" y="76.2" width="9.1" height="9.1" fill="#4aa8dd"/><rect x="18.5" y="78.0" width="5.5" height="5.5" fill="#50b0e4"/><rect x="25.2" y="76.2" width="9.1" height="9.1" fill="#4aa8dd"/><rect x="27.0" y="78.0" width="5.5" height="5.5" fill="#50b0e4"/><rect x="67.7" y="76.2" width="9.1" height="9.1" fill="#4aa8dd"/><rect x="69.5" y="78.0" width="5.5" height="5.5" fill="#50b0e4"/><rect x="76.2" y="76.2" width="9.1" height="9.1" fill="#4aa8dd"/><rect x="78.0" y="78.0" width="5.5" height="5.5" fill="#50b0e4"/><rect x="84.7" y="76.2" width="9.1" height="9.1" fill="#4aa8dd"/><rect x="86.5" y="78.0" width="5.5" height="5.5" fill="#50b0e4"/><rect x="16.7" y="84.7" width="9.1" height="9.1" fill="#4aa8dd"/><rect x="18.5" y="86.5" width="5.5" height="5.5" fill="#50b0e4"/><rect x="25.2" y="84.7" width="9.1" height="9.1" fill="#4aa8dd"/><rect x="27.0" y="86.5" width="5.5" height="5.5" fill="#50b0e4"/><rect x="33.7" y="84.7" width="9.1" height="9.1" fill="#4aa8dd"/><rect x="35.5" y="86.5" width="5.5" height="5.5" fill="#50b0e4"/><rect x="59.2" y="84.7" width="9.1" height="9.1" fill="#4aa8dd"/><rect x="61.0" y="86.5" width="5.5" height="5.5" fill="#50b0e4"/><rect x="67.7" y="84.7" width="9.1" height="9.1" fill="#4aa8dd"/><rect x="69.5" y="86.5" width="5.5" height="5.5" fill="#50b0e4"/><rect x="76.2" y="84.7" width="9.1" height="9.1" fill="#4aa8dd"/><rect x="78.0" y="86.5" width="5.5" height="5.5" fill="#50b0e4"/><rect x="33.7" y="93.2" width="9.1" height="9.1" fill="#4aa8dd"/><rect x="35.5" y="95.0" width="5.5" height="5.5" fill="#50b0e4"/><rect x="42.2" y="93.2" width="9.1" height="9.1" fill="#4aa8dd"/><rect x="44.0" y="95.0" width="5.5" height="5.5" fill="#50b0e4"/><rect x="50.7" y="93.2" width="9.1" height="9.1" fill="#4aa8dd"/><rect x="52.5" y="95.0" width="5.5" height="5.5" fill="#50b0e4"/><rect x="59.2" y="93.2" width="9.1" height="9.1" fill="#4aa8dd"/><rect x="61.0" y="95.0" width="5.5" height="5.5" fill="#50b0e4"/><rect x="67.7" y="93.2" width="9.1" height="9.1" fill="#4aa8dd"/><rect x="69.5" y="95.0" width="5.5" height="5.5" fill="#50b0e4"/><rect x="33.7" y="101.7" width="9.1" height="9.1" fill="#4aa8dd"/><rect x="35.5" y="103.5" width="5.5" height="5.5" fill="#50b0e4"/><rect x="42.2" y="101.7" width="9.1" height="9.1" fill="#4aa8dd"/><rect x="44.0" y="103.5" width="5.5" height="5.5" fill="#50b0e4"/><rect x="50.7" y="101.7" width="9.1" height="9.1" fill="#4aa8dd"/><rect x="52.5" y="103.5" width="5.5" height="5.5" fill="#50b0e4"/><rect x="59.2" y="101.7" width="9.1" height="9.1" fill="#4aa8dd"/><rect x="61.0" y="103.5" width="5.5" height="5.5" fill="#50b0e4"/><rect x="33.7" y="110.2" width="9.1" height="9.1" fill="#4aa8dd"/><rect x="35.5" y="112.0" width="5.5" height="5.5" fill="#50b0e4"/><rect x="42.2" y="110.2" width="9.1" height="9.1" fill="#4aa8dd"/><rect x="44.0" y="112.0" width="5.5" height="5.5" fill="#50b0e4"/><rect x="50.7" y="110.2" width="9.1" height="9.1" fill="#4aa8dd"/><rect x="52.5" y="112.0" width="5.5" height="5.5" fill="#50b0e4"/><rect x="59.2" y="110.2" width="9.1" height="9.1" fill="#4aa8dd"/><rect x="61.0" y="112.0" width="5.5" height="5.5" fill="#50b0e4"/><rect x="25.2" y="118.7" width="9.1" height="9.1" fill="#4aa8dd"/><rect x="27.0" y="120.5" width="5.5" height="5.5" fill="#50b0e4"/><rect x="33.7" y="118.7" width="9.1" height="9.1" fill="#4aa8dd"/><rect x="35.5" y="120.5" width="5.5" height="5.5" fill="#50b0e4"/><rect x="42.2" y="118.7" width="9.1" height="9.1" fill="#4aa8dd"/><rect x="44.0" y="120.5" width="5.5" height="5.5" fill="#50b0e4"/><rect x="50.7" y="118.7" width="9.1" height="9.1" fill="#4aa8dd"/><rect x="52.5" y="120.5" width="5.5" height="5.5" fill="#50b0e4"/><rect x="59.2" y="118.7" width="9.1" height="9.1" fill="#4aa8dd"/><rect x="61.0" y="120.5" width="5.5" height="5.5" fill="#50b0e4"/><rect x="67.7" y="118.7" width="9.1" height="9.1" fill="#4aa8dd"/><rect x="69.5" y="120.5" width="5.5" height="5.5" fill="#50b0e4"/><rect x="16.7" y="127.2" width="9.1" height="9.1" fill="#4aa8dd"/><rect x="18.5" y="129.0" width="5.5" height="5.5" fill="#50b0e4"/><rect x="25.2" y="127.2" width="9.1" height="9.1" fill="#4aa8dd"/><rect x="27.0" y="129.0" width="5.5" height="5.5" fill="#50b0e4"/><rect x="33.7" y="127.2" width="9.1" height="9.1" fill="#4aa8dd"/><rect x="35.5" y="129.0" width="5.5" height="5.5" fill="#50b0e4"/><rect x="59.2" y="127.2" width="9.1" height="9.1" fill="#4aa8dd"/><rect x="61.0" y="129.0" width="5.5" height="5.5" fill="#50b0e4"/><rect x="67.7" y="127.2" width="9.1" height="9.1" fill="#4aa8dd"/><rect x="69.5" y="129.0" width="5.5" height="5.5" fill="#50b0e4"/><rect x="76.2" y="127.2" width="9.1" height="9.1" fill="#4aa8dd"/><rect x="78.0" y="129.0" width="5.5" height="5.5" fill="#50b0e4"/><rect x="8.2" y="135.7" width="9.1" height="9.1" fill="#4aa8dd"/><rect x="10.0" y="137.5" width="5.5" height="5.5" fill="#50b0e4"/><rect x="16.7" y="135.7" width="9.1" height="9.1" fill="#4aa8dd"/><rect x="18.5" y="137.5" width="5.5" height="5.5" fill="#50b0e4"/><rect x="25.2" y="135.7" width="9.1" height="9.1" fill="#4aa8dd"/><rect x="27.0" y="137.5" width="5.5" height="5.5" fill="#50b0e4"/><rect x="67.7" y="135.7" width="9.1" height="9.1" fill="#4aa8dd"/><rect x="69.5" y="137.5" width="5.5" height="5.5" fill="#50b0e4"/><rect x="76.2" y="135.7" width="9.1" height="9.1" fill="#4aa8dd"/><rect x="78.0" y="137.5" width="5.5" height="5.5" fill="#50b0e4"/><rect x="84.7" y="135.7" width="9.1" height="9.1" fill="#4aa8dd"/><rect x="86.5" y="137.5" width="5.5" height="5.5" fill="#50b0e4"/><rect x="-0.3" y="144.2" width="9.1" height="9.1" fill="#4aa8dd"/><rect x="1.5" y="146.0" width="5.5" height="5.5" fill="#50b0e4"/><rect x="8.2" y="144.2" width="9.1" height="9.1" fill="#4aa8dd"/><rect x="10.0" y="146.0" width="5.5" height="5.5" fill="#50b0e4"/><rect x="16.7" y="144.2" width="9.1" height="9.1" fill="#4aa8dd"/><rect x="18.5" y="146.0" width="5.5" height="5.5" fill="#50b0e4"/><rect x="76.2" y="144.2" width="9.1" height="9.1" fill="#4aa8dd"/><rect x="78.0" y="146.0" width="5.5" height="5.5" fill="#50b0e4"/><rect x="84.7" y="144.2" width="9.1" height="9.1" fill="#4aa8dd"/><rect x="86.5" y="146.0" width="5.5" height="5.5" fill="#50b0e4"/><rect x="93.2" y="144.2" width="9.1" height="9.1" fill="#4aa8dd"/><rect x="95.0" y="146.0" width="5.5" height="5.5" fill="#50b0e4"/><rect x="-0.3" y="152.7" width="9.1" height="9.1" fill="#4aa8dd"/><rect x="1.5" y="154.5" width="5.5" height="5.5" fill="#50b0e4"/><rect x="8.2" y="152.7" width="9.1" height="9.1" fill="#4aa8dd"/><rect x="10.0" y="154.5" width="5.5" height="5.5" fill="#50b0e4"/><rect x="16.7" y="152.7" width="9.1" height="9.1" fill="#4aa8dd"/><rect x="18.5" y="154.5" width="5.5" height="5.5" fill="#50b0e4"/><rect x="25.2" y="152.7" width="9.1" height="9.1" fill="#4aa8dd"/><rect x="27.0" y="154.5" width="5.5" height="5.5" fill="#50b0e4"/><rect x="67.7" y="152.7" width="9.1" height="9.1" fill="#4aa8dd"/><rect x="69.5" y="154.5" width="5.5" height="5.5" fill="#50b0e4"/><rect x="76.2" y="152.7" width="9.1" height="9.1" fill="#4aa8dd"/><rect x="78.0" y="154.5" width="5.5" height="5.5" fill="#50b0e4"/><rect x="84.7" y="152.7" width="9.1" height="9.1" fill="#4aa8dd"/><rect x="86.5" y="154.5" width="5.5" height="5.5" fill="#50b0e4"/><rect x="93.2" y="152.7" width="9.1" height="9.1" fill="#4aa8dd"/><rect x="95.0" y="154.5" width="5.5" height="5.5" fill="#50b0e4"/><rect x="10.0" y="9.5" width="5.5" height="49.0" fill="#6cd8f8"/><rect x="9.5" y="17.0" width="1" height="34.0" fill="#8a8f95"/><rect x="15.0" y="17.0" width="1" height="34.0" fill="#8a8f95"/><rect x="11.5" y="10.5" width="2.5" height="47.0" fill="#9aeaff"/><rect x="86.5" y="9.5" width="5.5" height="49.0" fill="#6cd8f8"/><rect x="86.0" y="17.0" width="1" height="34.0" fill="#8a8f95"/><rect x="91.5" y="17.0" width="1" height="34.0" fill="#8a8f95"/><rect x="88.0" y="10.5" width="2.5" height="47.0" fill="#9aeaff"/><rect x="17.0" y="154.5" width="17.0" height="5.5" fill="#6cd8f8"/><rect x="18.0" y="156.0" width="15.0" height="2" fill="#9aeaff"/><rect x="68.0" y="154.5" width="17.0" height="5.5" fill="#6cd8f8"/><rect x="69.0" y="156.0" width="15.0" height="2" fill="#9aeaff"/></svg>
<svg class="a" style="left:269px;top:144px" width="40" height="40" viewBox="955 525 40 40"><path d="M967 535.8 L971 536.5 L976 540 L980 543 L982 547 L980.5 552 L976 555.5 L968 558.2 L964 557.8 L964.5 554 L969 551.5 L972 548 L971.5 543 L967 540 Z" fill="#a872d6"/></svg>
</div>

</div>
</body></html>
